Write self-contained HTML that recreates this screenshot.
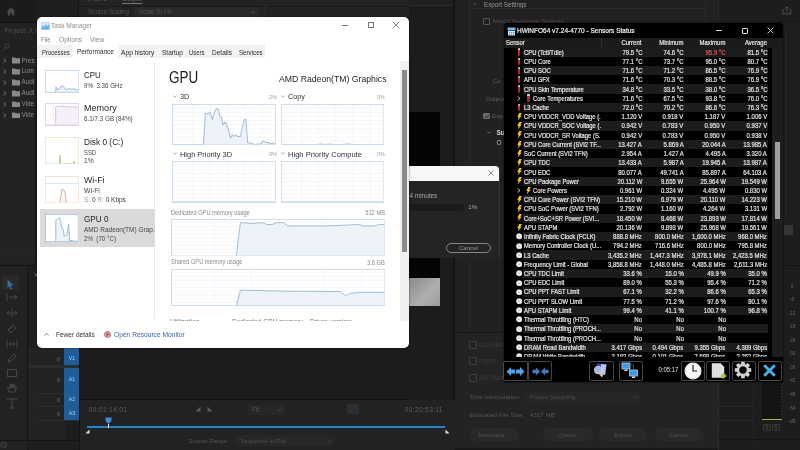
<!DOCTYPE html><html><head><meta charset="utf-8"><style>
html,body{margin:0;padding:0;width:800px;height:450px;overflow:hidden;background:#1e1e1e;}
body{position:relative;font-family:"Liberation Sans",sans-serif;}
div,svg{box-sizing:border-box;}
#root{position:absolute;left:0;top:0;width:800px;height:450px;will-change:transform;}
</style></head><body><div id="root">
<div style="position:absolute;left:0.00px;top:0.00px;width:800.00px;height:450.00px;background:#1f1f1f;"></div>
<div style="position:absolute;left:0.00px;top:0.00px;width:78.00px;height:22.00px;background:#1a1a1a;"></div>
<div style="position:absolute;left:0.00px;top:0.00px;width:800.00px;height:450.00px;background:#1e1e1e;"></div>
<div style="position:absolute;left:0.00px;top:0.00px;width:37.00px;height:22.00px;background:#1b1b1b;"></div>
<svg style="position:absolute;left:5.5px;top:6.5px" width="10" height="9" viewBox="0 0 10 9"><path d="M5 0.5 L9.5 4.5 L8.2 4.5 L8.2 8.5 L6 8.5 L6 6 L4 6 L4 8.5 L1.8 8.5 L1.8 4.5 L0.5 4.5Z" fill="#4a4a4a"/></svg>
<div style="position:absolute;left:0.00px;top:22.00px;width:37.00px;height:0.80px;background:#121212;"></div>
<div style="position:absolute;left:0.00px;top:23.00px;width:37.00px;height:17.00px;background:#222;"></div>
<div style="position:absolute;top:27.90px;font-size:6.6px;line-height:6.6px;color:#505050;white-space:nowrap;left:4.50px;">Project: X F</div>
<div style="position:absolute;left:0.00px;top:40.00px;width:37.00px;height:15.00px;background:#202020;"></div>
<svg style="position:absolute;left:2px;top:43px" width="8" height="8" viewBox="0 0 8 8"><circle cx="5" cy="3" r="2.2" fill="none" stroke="#444" stroke-width="0.9"/><path d="M3.4 4.6 L0.8 7.2" stroke="#444" stroke-width="1"/></svg>
<div style="position:absolute;left:0.00px;top:55.00px;width:37.00px;height:209.00px;background:#232323;"></div>
<svg style="position:absolute;left:2.5px;top:58.20px" width="4" height="5" viewBox="0 0 4 5"><path d="M0.6 0.5 L3 2.5 L0.6 4.5" fill="none" stroke="#8a8a8a" stroke-width="0.8"/></svg>
<svg style="position:absolute;left:11.5px;top:57.10px" width="8" height="6.6" viewBox="0 0 8 6.6"><path d="M0 0.4 L3 0.4 L3.8 1.3 L8 1.3 L8 6.6 L0 6.6Z" fill="#8a8a8a"/></svg>
<div style="position:absolute;top:57.50px;font-size:6.4px;line-height:6.4px;color:#8a8a8a;white-space:nowrap;left:21.50px;">Prese</div>
<svg style="position:absolute;left:2.5px;top:69.15px" width="4" height="5" viewBox="0 0 4 5"><path d="M0.6 0.5 L3 2.5 L0.6 4.5" fill="none" stroke="#8a8a8a" stroke-width="0.8"/></svg>
<svg style="position:absolute;left:11.5px;top:68.05px" width="8" height="6.6" viewBox="0 0 8 6.6"><path d="M0 0.4 L3 0.4 L3.8 1.3 L8 1.3 L8 6.6 L0 6.6Z" fill="#8a8a8a"/></svg>
<div style="position:absolute;top:68.45px;font-size:6.4px;line-height:6.4px;color:#8a8a8a;white-space:nowrap;left:21.50px;">Lum</div>
<svg style="position:absolute;left:2.5px;top:80.10px" width="4" height="5" viewBox="0 0 4 5"><path d="M0.6 0.5 L3 2.5 L0.6 4.5" fill="none" stroke="#8a8a8a" stroke-width="0.8"/></svg>
<svg style="position:absolute;left:11.5px;top:79.00px" width="8" height="6.6" viewBox="0 0 8 6.6"><path d="M0 0.4 L3 0.4 L3.8 1.3 L8 1.3 L8 6.6 L0 6.6Z" fill="#8a8a8a"/></svg>
<div style="position:absolute;top:79.40px;font-size:6.4px;line-height:6.4px;color:#8a8a8a;white-space:nowrap;left:21.50px;">Audi</div>
<svg style="position:absolute;left:2.5px;top:91.05px" width="4" height="5" viewBox="0 0 4 5"><path d="M0.6 0.5 L3 2.5 L0.6 4.5" fill="none" stroke="#8a8a8a" stroke-width="0.8"/></svg>
<svg style="position:absolute;left:11.5px;top:89.95px" width="8" height="6.6" viewBox="0 0 8 6.6"><path d="M0 0.4 L3 0.4 L3.8 1.3 L8 1.3 L8 6.6 L0 6.6Z" fill="#8a8a8a"/></svg>
<div style="position:absolute;top:90.35px;font-size:6.4px;line-height:6.4px;color:#8a8a8a;white-space:nowrap;left:21.50px;">Audi</div>
<svg style="position:absolute;left:2.5px;top:102.00px" width="4" height="5" viewBox="0 0 4 5"><path d="M0.6 0.5 L3 2.5 L0.6 4.5" fill="none" stroke="#8a8a8a" stroke-width="0.8"/></svg>
<svg style="position:absolute;left:11.5px;top:100.90px" width="8" height="6.6" viewBox="0 0 8 6.6"><path d="M0 0.4 L3 0.4 L3.8 1.3 L8 1.3 L8 6.6 L0 6.6Z" fill="#8a8a8a"/></svg>
<div style="position:absolute;top:101.30px;font-size:6.4px;line-height:6.4px;color:#8a8a8a;white-space:nowrap;left:21.50px;">Vide</div>
<svg style="position:absolute;left:2.5px;top:112.95px" width="4" height="5" viewBox="0 0 4 5"><path d="M0.6 0.5 L3 2.5 L0.6 4.5" fill="none" stroke="#8a8a8a" stroke-width="0.8"/></svg>
<svg style="position:absolute;left:11.5px;top:111.85px" width="8" height="6.6" viewBox="0 0 8 6.6"><path d="M0 0.4 L3 0.4 L3.8 1.3 L8 1.3 L8 6.6 L0 6.6Z" fill="#8a8a8a"/></svg>
<div style="position:absolute;top:112.25px;font-size:6.4px;line-height:6.4px;color:#8a8a8a;white-space:nowrap;left:21.50px;">Vide</div>
<div style="position:absolute;left:35.00px;top:55.00px;width:2.00px;height:209.00px;background:#1a1a1a;"></div>
<div style="position:absolute;left:0.00px;top:254.10px;width:37.00px;height:0.60px;background:#282828;"></div>
<div style="position:absolute;left:0.00px;top:264.60px;width:37.00px;height:1.40px;background:#151515;"></div>
<div style="position:absolute;left:0.00px;top:266.00px;width:26.50px;height:184.00px;background:#222;"></div>
<div style="position:absolute;left:26.50px;top:266.00px;width:1.00px;height:184.00px;background:#151515;"></div>
<div style="position:absolute;left:27.50px;top:266.00px;width:9.50px;height:82.00px;background:#1e1e1e;"></div>
<svg style="position:absolute;left:33.5px;top:273px" width="4" height="4" viewBox="0 0 4 4"><path d="M0.5 0.5L3.5 3.5M3.5 0.5L0.5 3.5" stroke="#777" stroke-width="0.7"/></svg>
<div style="position:absolute;left:2.30px;top:275.40px;width:16.40px;height:14.80px;background:#2a2a2a;"></div>
<svg style="position:absolute;left:7px;top:278.5px" width="7" height="11" viewBox="0 0 7 11"><path d="M0.5 0.5 L6.5 6.5 L3.6 6.5 L5 10 L3.6 10.5 L2.2 7 L0.5 8.7Z" fill="#3b6ea6"/></svg>
<svg style="position:absolute;left:5.5px;top:292.00px" width="12" height="11" viewBox="0 0 12 11"><path d="M1 1 L1 9 M3 5 L11 5 M8 3 L11 5 L8 7" fill="none" stroke="#4c4c4c" stroke-width="0.9"/></svg>
<svg style="position:absolute;left:5.5px;top:308.00px" width="12" height="11" viewBox="0 0 12 11"><path d="M6 1 L6 9 M1 5 L5 5 M7 5 L11 5 M3 3 L1 5 L3 7 M9 3 L11 5 L9 7" fill="none" stroke="#4c4c4c" stroke-width="0.9"/></svg>
<svg style="position:absolute;left:5.5px;top:323.00px" width="12" height="11" viewBox="0 0 12 11"><path d="M2 7 L7 2 L10 5 L5 10Z M3.5 6.5 L6.5 3.5" fill="none" stroke="#4c4c4c" stroke-width="0.9"/></svg>
<svg style="position:absolute;left:5.5px;top:338.70px" width="12" height="11" viewBox="0 0 12 11"><path d="M1 1 L1 9 M11 1 L11 9 M3 5 L9 5 M4.5 3.5 L3 5 L4.5 6.5 M7.5 3.5 L9 5 L7.5 6.5" fill="none" stroke="#4c4c4c" stroke-width="0.9"/></svg>
<svg style="position:absolute;left:5.5px;top:353.00px" width="12" height="11" viewBox="0 0 12 11"><path d="M2 9 L3 6 L8 1 L10 3 L5 8Z" fill="none" stroke="#4c4c4c" stroke-width="0.9"/></svg>
<svg style="position:absolute;left:5.5px;top:368.00px" width="12" height="11" viewBox="0 0 12 11"><rect x="1.5" y="1.5" width="9" height="7" fill="none" stroke="#4c4c4c" stroke-width="0.9"/></svg>
<svg style="position:absolute;left:5.5px;top:382.70px" width="12" height="11" viewBox="0 0 12 11"><path d="M3 9 L1.5 5 L3 4.5 L4 6 L4 1.5 L5.2 1.5 L5.2 5 L5.5 1 L6.8 1 L6.8 5 L7.3 1.5 L8.5 1.5 L8.5 5.5 L9.5 3.5 L10.5 4 L9 9Z" fill="none" stroke="#4c4c4c" stroke-width="0.9"/></svg>
<svg style="position:absolute;left:5.5px;top:398.00px" width="12" height="11" viewBox="0 0 12 11"><path d="M1.5 2.5 L1.5 1 L10.5 1 L10.5 2.5 M6 1 L6 10 M4 10 L8 10" fill="none" stroke="#4c4c4c" stroke-width="0.9"/></svg>
<div style="position:absolute;left:0.00px;top:440.00px;width:80.00px;height:0.80px;background:#151515;"></div>
<svg style="position:absolute;left:0px;top:441px" width="8" height="8" viewBox="0 0 8 8"><circle cx="3.5" cy="4" r="3" fill="none" stroke="#4a4a4a" stroke-width="0.8"/><path d="M1.5 2 L5.5 6 M5.5 2 L1.5 6" stroke="#4a4a4a" stroke-width="0.6"/></svg>
<div style="position:absolute;left:27.50px;top:348.00px;width:37.00px;height:92.00px;background:#232323;"></div>
<div style="position:absolute;left:64.20px;top:348.00px;width:15.40px;height:17.00px;background:#1d5e9a;"></div>
<div style="position:absolute;left:64.20px;top:368.00px;width:15.40px;height:52.10px;background:#1d5e9a;"></div>
<div style="position:absolute;left:64.20px;top:392.60px;width:15.40px;height:0.50px;background:#2a5a85;"></div>
<div style="position:absolute;left:64.20px;top:406.20px;width:15.40px;height:0.50px;background:#2a5a85;"></div>
<div style="position:absolute;left:27.50px;top:365.00px;width:52.00px;height:3.00px;background:#2c2c2c;"></div>
<div style="position:absolute;left:37.00px;top:392.90px;width:27.00px;height:0.50px;background:#2d2d2d;"></div>
<div style="position:absolute;left:37.00px;top:406.10px;width:27.00px;height:0.50px;background:#2d2d2d;"></div>
<div style="position:absolute;left:37.00px;top:420.30px;width:43.00px;height:0.60px;background:#2d2d2d;"></div>
<div style="position:absolute;top:356.20px;font-size:5.2px;line-height:5.2px;color:#b8cde0;white-space:nowrap;left:71.90px;transform:translateX(-50%);">V1</div>
<div style="position:absolute;left:56.50px;top:356.80px;width:3.00px;height:4.00px;background:#3d3d3d;"></div>
<div style="position:absolute;top:377.40px;font-size:5.2px;line-height:5.2px;color:#b8cde0;white-space:nowrap;left:71.90px;transform:translateX(-50%);">A1</div>
<div style="position:absolute;left:56.50px;top:378.00px;width:3.00px;height:4.00px;background:#3d3d3d;"></div>
<div style="position:absolute;top:397.00px;font-size:5.2px;line-height:5.2px;color:#b8cde0;white-space:nowrap;left:71.90px;transform:translateX(-50%);">A2</div>
<div style="position:absolute;left:56.50px;top:397.60px;width:3.00px;height:4.00px;background:#3d3d3d;"></div>
<div style="position:absolute;top:411.00px;font-size:5.2px;line-height:5.2px;color:#b8cde0;white-space:nowrap;left:71.90px;transform:translateX(-50%);">A3</div>
<div style="position:absolute;left:56.50px;top:411.60px;width:3.00px;height:4.00px;background:#3d3d3d;"></div>
<div style="position:absolute;left:78.00px;top:0.00px;width:332.00px;height:17.00px;background:#232323;"></div>
<div style="position:absolute;left:78.00px;top:0.00px;width:0.80px;height:17.00px;background:#141414;"></div>
<div style="position:absolute;top:-4.05px;font-size:6.5px;line-height:6.5px;color:#5a5a5a;white-space:nowrap;left:88.00px;">Frame</div>
<div style="position:absolute;top:-4.05px;font-size:6.5px;line-height:6.5px;color:#6a6a6a;white-space:nowrap;left:122.00px;">Output</div>
<div style="position:absolute;left:122.00px;top:3.20px;width:20.00px;height:0.70px;background:#777;"></div>
<div style="position:absolute;left:78.80px;top:6.00px;width:331.00px;height:0.70px;background:#1a1a1a;"></div>
<div style="position:absolute;top:9.10px;font-size:6.4px;line-height:6.4px;color:#505050;white-space:nowrap;left:88.00px;transform-origin:0 50%;transform: scaleX(0.95);">Source Scaling</div>
<div style="position:absolute;left:133.50px;top:6.50px;width:125.00px;height:11.00px;background:#2a2a2a;border-radius:1px;"></div>
<div style="position:absolute;top:9.10px;font-size:6.4px;line-height:6.4px;color:#505050;white-space:nowrap;left:138.70px;transform-origin:0 50%;transform: scaleX(0.95);">Scale To Fill</div>
<svg style="position:absolute;left:251px;top:10.5px" width="4" height="3" viewBox="0 0 4 3"><path d="M0.3 0.5 L2 2.2 L3.7 0.5" fill="none" stroke="#666" stroke-width="0.7"/></svg>
<div style="position:absolute;left:265.00px;top:4.00px;width:0.70px;height:13.00px;background:#2e2e2e;"></div>
<div style="position:absolute;left:80.00px;top:348.00px;width:330.00px;height:50.50px;background:#1c1c1c;"></div>
<div style="position:absolute;left:79.20px;top:348.00px;width:0.80px;height:102.00px;background:#141414;"></div>
<div style="position:absolute;left:80.00px;top:398.70px;width:375.00px;height:1.30px;background:#131313;"></div>
<div style="position:absolute;left:80.00px;top:400.00px;width:375.00px;height:50.00px;background:#222;"></div>
<div style="position:absolute;top:406.60px;font-size:6.6px;line-height:6.6px;color:#5e5e5e;white-space:nowrap;left:88.70px;letter-spacing:0.35px;">00:01:14:01</div>
<svg style="position:absolute;left:195px;top:405.5px" width="6" height="6" viewBox="0 0 6 6"><path d="M5.5 0.5 L5.5 5.5 L0.5 5.5Z" fill="#5a5a5a"/></svg>
<svg style="position:absolute;left:207px;top:405.5px" width="6" height="6" viewBox="0 0 6 6"><path d="M0.5 0.5 L0.5 5.5 L5.5 5.5Z" fill="#5a5a5a"/></svg>
<div style="position:absolute;left:248.00px;top:404.50px;width:37.00px;height:10.50px;background:#272727;border-radius:1px;"></div>
<svg style="position:absolute;left:278px;top:408.5px" width="4" height="3" viewBox="0 0 4 3"><path d="M0.3 0.5 L2 2.2 L3.7 0.5" fill="none" stroke="#555" stroke-width="0.7"/></svg>
<div style="position:absolute;top:406.50px;font-size:6.4px;line-height:6.4px;color:#555;white-space:nowrap;left:252.00px;">Fit</div>
<div style="position:absolute;left:87.00px;top:425.50px;width:358.00px;height:2.90px;background:#1b88d2;"></div>
<svg style="position:absolute;left:104.5px;top:417px" width="7" height="8" viewBox="0 0 7 8"><path d="M0.5 0.5 L6.5 0.5 L6.5 4 L3.5 7 L0.5 4Z" fill="#3a8ee0"/></svg>
<div style="position:absolute;left:107.80px;top:424.00px;width:0.70px;height:4.00px;background:#fff;"></div>
<svg style="position:absolute;left:84.5px;top:428.5px" width="5" height="5" viewBox="0 0 5 5"><path d="M4.5 0.5 L4.5 4.5 L0.5 4.5Z" fill="#ddd"/></svg>
<svg style="position:absolute;left:445px;top:428.5px" width="5" height="5" viewBox="0 0 5 5"><path d="M0.5 0.5 L4.5 4.5 L0.5 4.5Z" fill="#ddd"/></svg>
<div style="position:absolute;top:437.50px;font-size:6.0px;line-height:6.0px;color:#555;white-space:nowrap;right:571.50px;">Source Range:</div>
<div style="position:absolute;left:236.00px;top:435.00px;width:99.00px;height:11.00px;background:#272727;border-radius:1px;"></div>
<svg style="position:absolute;left:328px;top:439.5px" width="4" height="3" viewBox="0 0 4 3"><path d="M0.3 0.5 L2 2.2 L3.7 0.5" fill="none" stroke="#555" stroke-width="0.7"/></svg>
<div style="position:absolute;top:437.50px;font-size:6.0px;line-height:6.0px;color:#505050;white-space:nowrap;left:240.50px;">Sequence In/Out</div>
<div style="position:absolute;top:406.60px;font-size:6.6px;line-height:6.6px;color:#5e5e5e;white-space:nowrap;left:404.70px;letter-spacing:0.35px;">00:20:53:11</div>
<div style="position:absolute;left:347.00px;top:404.00px;width:12.00px;height:10.00px;background:#2a2e35;"></div>
<div style="position:absolute;left:409.00px;top:0.00px;width:45.00px;height:400.00px;background:#1c1c1c;"></div>
<div style="position:absolute;left:409.00px;top:0.00px;width:45.00px;height:5.20px;background:#1e1e1e;"></div>
<div style="position:absolute;left:409.00px;top:5.20px;width:45.00px;height:0.70px;background:#2c2c2c;"></div>
<div style="position:absolute;left:409.00px;top:112.00px;width:30.60px;height:165.80px;background:#050505;"></div>
<div style="position:absolute;left:409px;top:277.8px;width:30.6px;height:28.7px;background:linear-gradient(135deg,#8a8a8a,#b0b0b0 60%,#9a9a9a);"></div>
<div style="position:absolute;left:453.30px;top:0.00px;width:1.50px;height:400.00px;background:#141414;"></div>
<div style="position:absolute;left:454.80px;top:0.00px;width:263.00px;height:450.00px;background:#212121;"></div>
<div style="position:absolute;left:469.30px;top:0.00px;width:0.70px;height:332.00px;background:#282828;"></div>
<div style="position:absolute;left:455.00px;top:332.00px;width:263.00px;height:0.80px;background:#171717;"></div>
<div style="position:absolute;left:455.00px;top:332.80px;width:263.00px;height:118.00px;background:#232323;"></div>
<svg style="position:absolute;left:472.5px;top:2.5px" width="4" height="3" viewBox="0 0 4 3"><path d="M0.3 0.5 L2 2.2 L3.7 0.5" fill="none" stroke="#666" stroke-width="0.7"/></svg>
<div style="position:absolute;top:1.50px;font-size:6.6px;line-height:6.6px;color:#9a9a9a;white-space:nowrap;left:483.60px;transform-origin:0 50%;transform: scaleX(0.95);">Export Settings</div>
<div style="position:absolute;left:470.00px;top:8.10px;width:235.00px;height:0.70px;background:#2c2c2c;"></div>
<div style="position:absolute;left:705.00px;top:0.00px;width:0.70px;height:22.00px;background:#2a2a2a;"></div>
<div style="position:absolute;left:482.5px;top:18px;width:7.5px;height:6.8px;border:0.9px solid #555;border-radius:1px;"></div>
<div style="position:absolute;top:18.30px;font-size:6.2px;line-height:6.2px;color:#5a4848;white-space:nowrap;left:493.00px;">Match Sequence Settings</div>
<div style="position:absolute;top:77.60px;font-size:6.2px;line-height:6.2px;color:#5a5a5a;white-space:nowrap;left:492.90px;">Co</div>
<div style="position:absolute;top:96.20px;font-size:6.2px;line-height:6.2px;color:#606060;white-space:nowrap;left:485.80px;">Output</div>
<div style="position:absolute;left:482.7px;top:112.7px;width:7.2px;height:6.8px;background:#6a6a6a;border-radius:1px;"></div>
<svg style="position:absolute;left:483.5px;top:113.5px" width="6" height="5" viewBox="0 0 6 5"><path d="M0.8 2.5 L2.3 4 L5.3 0.8" fill="none" stroke="#222" stroke-width="0.9"/></svg>
<div style="position:absolute;top:113.10px;font-size:6.2px;line-height:6.2px;color:#606060;white-space:nowrap;left:492.00px;">Exp</div>
<svg style="position:absolute;left:486.5px;top:131px" width="4" height="3" viewBox="0 0 4 3"><path d="M0.3 0.5 L2 2.2 L3.7 0.5" fill="none" stroke="#777" stroke-width="0.7"/></svg>
<div style="position:absolute;top:129.80px;font-size:6.4px;line-height:6.4px;color:#ddd;white-space:nowrap;left:496.40px;font-weight:bold;">Su</div>
<div style="position:absolute;top:139.80px;font-size:6.4px;line-height:6.4px;color:#bbb;white-space:nowrap;left:496.40px;">O</div>
<div style="position:absolute;left:409.00px;top:165.70px;width:90.20px;height:92.50px;background:#242424;"></div>
<div style="position:absolute;left:409.00px;top:165.70px;width:90.20px;height:15.00px;background:#f7f7f7;border-radius:0 4px 0 0;"></div>
<svg style="position:absolute;left:487.5px;top:169.8px" width="6" height="6" viewBox="0 0 6 6"><path d="M0.4 0.4L5.6 5.6M5.6 0.4L0.4 5.6" stroke="#777" stroke-width="0.8"/></svg>
<div style="position:absolute;top:192.80px;font-size:6.4px;line-height:6.4px;color:#aaa;white-space:nowrap;left:409.50px;">4 minutes</div>
<div style="position:absolute;left:409.00px;top:204.30px;width:55.00px;height:6.50px;background:#1b1b1b;border-radius:0 3px 3px 0;"></div>
<div style="position:absolute;top:204.40px;font-size:6.2px;line-height:6.2px;color:#aaa;white-space:nowrap;right:322.70px;">1%</div>
<div style="position:absolute;left:446px;top:242.5px;width:44.8px;height:10.7px;border:1px solid #888;border-radius:5px;"></div>
<div style="position:absolute;top:244.85px;font-size:6.1px;line-height:6.1px;color:#9a9a9a;white-space:nowrap;left:468.40px;transform:translateX(-50%);">Cancel</div>
<div style="position:absolute;left:499.20px;top:165.70px;width:0.80px;height:92.50px;background:#333;"></div>
<div style="position:absolute;left:469px;top:341.00px;width:7.6px;height:7.6px;border:0.9px solid #3f3f3f;border-radius:1px;"></div>
<div style="position:absolute;top:341.60px;font-size:6.6px;line-height:6.6px;color:#3c3c3c;white-space:nowrap;left:479.00px;transform-origin:0 50%;transform: scaleX(0.95);">Use Max</div>
<div style="position:absolute;left:469px;top:357.30px;width:7.6px;height:7.6px;border:0.9px solid #3f3f3f;border-radius:1px;"></div>
<div style="position:absolute;top:357.90px;font-size:6.6px;line-height:6.6px;color:#3c3c3c;white-space:nowrap;left:479.00px;transform-origin:0 50%;transform: scaleX(0.95);">Import</div>
<div style="position:absolute;left:469px;top:374.10px;width:7.6px;height:7.6px;border:0.9px solid #3f3f3f;border-radius:1px;"></div>
<div style="position:absolute;top:374.70px;font-size:6.6px;line-height:6.6px;color:#3c3c3c;white-space:nowrap;left:479.00px;transform-origin:0 50%;transform: scaleX(0.95);">Set Start</div>
<div style="position:absolute;top:393.90px;font-size:6.2px;line-height:6.2px;color:#555;white-space:nowrap;left:469.50px;">Time Interpolation:</div>
<div style="position:absolute;left:525.00px;top:391.50px;width:115.00px;height:11.00px;background:#262626;border-radius:1px;"></div>
<div style="position:absolute;top:393.90px;font-size:6.2px;line-height:6.2px;color:#4a4a4a;white-space:nowrap;left:530.00px;">Frame Sampling</div>
<svg style="position:absolute;left:635px;top:395.5px" width="4" height="3" viewBox="0 0 4 3"><path d="M0.3 0.5 L2 2.2 L3.7 0.5" fill="none" stroke="#555" stroke-width="0.7"/></svg>
<div style="position:absolute;top:412.40px;font-size:6.2px;line-height:6.2px;color:#555;white-space:nowrap;left:469.50px;">Estimated File Size:</div>
<div style="position:absolute;top:412.40px;font-size:6.2px;line-height:6.2px;color:#555;white-space:nowrap;left:530.00px;">4317 MB</div>
<div style="position:absolute;left:468.7px;top:428px;width:50.80px;height:13.2px;background:#292929;border-radius:6.6px;"></div>
<div style="position:absolute;top:431.50px;font-size:6.2px;line-height:6.2px;color:#4e4e4e;white-space:nowrap;left:494.10px;transform:translateX(-50%);">Metadata...</div>
<div style="position:absolute;left:542.5px;top:428px;width:50.00px;height:13.2px;background:#292929;border-radius:6.6px;"></div>
<div style="position:absolute;top:431.50px;font-size:6.2px;line-height:6.2px;color:#4e4e4e;white-space:nowrap;left:567.50px;transform:translateX(-50%);">Queue</div>
<div style="position:absolute;left:598.7px;top:428px;width:48.80px;height:13.2px;background:#292929;border-radius:6.6px;"></div>
<div style="position:absolute;top:431.50px;font-size:6.2px;line-height:6.2px;color:#4e4e4e;white-space:nowrap;left:623.10px;transform:translateX(-50%);">Export</div>
<div style="position:absolute;left:654.5px;top:428px;width:49.20px;height:13.2px;background:#292929;border-radius:6.6px;"></div>
<div style="position:absolute;top:431.50px;font-size:6.2px;line-height:6.2px;color:#4e4e4e;white-space:nowrap;left:679.10px;transform:translateX(-50%);">Cancel</div>
<div style="position:absolute;left:717.50px;top:0.00px;width:1.00px;height:450.00px;background:#2a2a2a;"></div>
<div style="position:absolute;left:455.00px;top:448.40px;width:263.00px;height:1.60px;background:#191919;"></div>
<div style="position:absolute;left:718.50px;top:0.00px;width:81.50px;height:450.00px;background:#1d1d1d;"></div>
<div style="position:absolute;left:718.50px;top:21.00px;width:81.50px;height:0.80px;background:#161616;"></div>
<svg style="position:absolute;left:782px;top:6px" width="9.5" height="8.5" viewBox="0 0 10 9"><path d="M2 4 L0.7 4 L0.7 8.3 L9.3 8.3 L9.3 4 L8 4 M5 6 L5 0.8 M3.2 2.6 L5 0.8 L6.8 2.6" fill="none" stroke="#5a5a5a" stroke-width="0.9"/></svg>
<div style="position:absolute;left:786.00px;top:22.00px;width:0.60px;height:200.00px;background:#222;"></div>
<div style="position:absolute;left:790.00px;top:22.00px;width:0.60px;height:200.00px;background:#222;"></div>
<div style="position:absolute;left:794.00px;top:22.00px;width:0.60px;height:200.00px;background:#222;"></div>
<div style="position:absolute;left:798.00px;top:22.00px;width:0.60px;height:200.00px;background:#222;"></div>
<div style="position:absolute;left:784.00px;top:224.90px;width:9.30px;height:10.60px;background:#363636;"></div>
<div style="position:absolute;left:783.00px;top:265.30px;width:17.00px;height:0.80px;background:#141414;"></div>
<div style="position:absolute;left:761.50px;top:382.00px;width:20.30px;height:37.00px;background:#141414;"></div>
<div style="position:absolute;left:761.50px;top:418.70px;width:20.30px;height:0.90px;background:#aeb22e;"></div>
<div style="position:absolute;left:781.00px;top:384.00px;width:0.80px;height:1.00px;background:#3a3a3a;"></div>
<div style="position:absolute;left:781.00px;top:387.00px;width:0.80px;height:1.00px;background:#3a3a3a;"></div>
<div style="position:absolute;left:781.00px;top:390.00px;width:0.80px;height:1.00px;background:#3a3a3a;"></div>
<div style="position:absolute;left:781.00px;top:393.00px;width:0.80px;height:1.00px;background:#3a3a3a;"></div>
<div style="position:absolute;left:781.00px;top:396.00px;width:0.80px;height:1.00px;background:#3a3a3a;"></div>
<div style="position:absolute;left:781.00px;top:399.00px;width:0.80px;height:1.00px;background:#3a3a3a;"></div>
<div style="position:absolute;left:781.00px;top:402.00px;width:0.80px;height:1.00px;background:#3a3a3a;"></div>
<div style="position:absolute;left:781.00px;top:405.00px;width:0.80px;height:1.00px;background:#3a3a3a;"></div>
<div style="position:absolute;left:781.00px;top:408.00px;width:0.80px;height:1.00px;background:#3a3a3a;"></div>
<div style="position:absolute;left:781.00px;top:411.00px;width:0.80px;height:1.00px;background:#3a3a3a;"></div>
<div style="position:absolute;left:781.00px;top:414.00px;width:0.80px;height:1.00px;background:#3a3a3a;"></div>
<div style="position:absolute;left:781.00px;top:417.00px;width:0.80px;height:1.00px;background:#3a3a3a;"></div>
<div style="position:absolute;left:763.00px;top:424.30px;width:8.00px;height:7.00px;background:#202020;border:0.6px solid #333;"></div>
<div style="position:absolute;left:772.00px;top:424.30px;width:8.00px;height:7.00px;background:#202020;border:0.6px solid #333;"></div>
<div style="position:absolute;top:425.55px;font-size:4.5px;line-height:4.5px;color:#555;white-space:nowrap;left:767.00px;transform:translateX(-50%);">S</div>
<div style="position:absolute;top:425.55px;font-size:4.5px;line-height:4.5px;color:#555;white-space:nowrap;left:776.00px;transform:translateX(-50%);">S</div>
<div style="position:absolute;top:284.50px;font-size:4.6px;line-height:4.6px;color:#666;white-space:nowrap;left:792.00px;transform:translateX(-50%);">0</div>
<div style="position:absolute;top:298.07px;font-size:4.6px;line-height:4.6px;color:#666;white-space:nowrap;left:792.00px;transform:translateX(-50%);">-6</div>
<div style="position:absolute;top:311.64px;font-size:4.6px;line-height:4.6px;color:#666;white-space:nowrap;left:792.00px;transform:translateX(-50%);">-12</div>
<div style="position:absolute;top:325.21px;font-size:4.6px;line-height:4.6px;color:#666;white-space:nowrap;left:792.00px;transform:translateX(-50%);">-18</div>
<div style="position:absolute;top:338.78px;font-size:4.6px;line-height:4.6px;color:#666;white-space:nowrap;left:792.00px;transform:translateX(-50%);">-24</div>
<div style="position:absolute;top:352.35px;font-size:4.6px;line-height:4.6px;color:#666;white-space:nowrap;left:792.00px;transform:translateX(-50%);">-30</div>
<div style="position:absolute;top:365.92px;font-size:4.6px;line-height:4.6px;color:#666;white-space:nowrap;left:792.00px;transform:translateX(-50%);">-36</div>
<div style="position:absolute;top:379.49px;font-size:4.6px;line-height:4.6px;color:#666;white-space:nowrap;left:792.00px;transform:translateX(-50%);">-42</div>
<div style="position:absolute;top:393.06px;font-size:4.6px;line-height:4.6px;color:#666;white-space:nowrap;left:792.00px;transform:translateX(-50%);">-48</div>
<div style="position:absolute;top:406.63px;font-size:4.6px;line-height:4.6px;color:#666;white-space:nowrap;left:792.00px;transform:translateX(-50%);">-54</div>
<div style="position:absolute;top:420.20px;font-size:4.6px;line-height:4.6px;color:#666;white-space:nowrap;left:792.00px;transform:translateX(-50%);">-dB</div>
<div style="position:absolute;left:753.00px;top:382.00px;width:0.80px;height:60.00px;background:#262626;"></div>
<div style="position:absolute;left:718.50px;top:405.70px;width:35.00px;height:0.60px;background:#262626;"></div>
<div style="position:absolute;left:718.50px;top:419.70px;width:35.00px;height:0.60px;background:#262626;"></div>
<div style="position:absolute;left:718.50px;top:439.00px;width:81.50px;height:0.80px;background:#151515;"></div>
<div style="position:absolute;left:37px;top:17px;width:372px;height:331px;background:#fff;border-radius:5px;box-shadow:0 0 2px rgba(0,0,0,.6);"></div>
<svg style="position:absolute;left:41px;top:21.5px" width="9" height="8" viewBox="0 0 9 8"><rect x="0" y="0" width="9" height="8" fill="#d6e7f5" stroke="#9fbfdc" stroke-width="0.6"/><path d="M0.8 6 L2.2 3 L3.6 5 L5 2.2 L6.5 4.5 L8.2 2 L8.2 7.4 L0.8 7.4Z" fill="#6aaee3"/></svg>
<div style="position:absolute;top:21.65px;font-size:7.3px;line-height:7.3px;color:#8c8c8c;white-space:nowrap;left:50.70px;transform-origin:0 50%;transform: scaleX(0.894);">Task Manager</div>
<div style="position:absolute;left:342.00px;top:25.00px;width:6.00px;height:0.80px;background:#777;"></div>
<div style="position:absolute;left:367.5px;top:21.5px;width:6.5px;height:6.5px;border:0.9px solid #777;"></div>
<svg style="position:absolute;left:392px;top:21px" width="8" height="8" viewBox="0 0 8 8"><path d="M0.5 0.5L7.5 7.5M7.5 0.5L0.5 7.5" stroke="#777" stroke-width="0.9"/></svg>
<div style="position:absolute;top:35.60px;font-size:7.2px;line-height:7.2px;color:#8a8a8a;white-space:nowrap;left:41.25px;transform-origin:0 50%;transform: scaleX(0.84);">File</div>
<div style="position:absolute;top:35.60px;font-size:7.2px;line-height:7.2px;color:#8a8a8a;white-space:nowrap;left:59.25px;transform-origin:0 50%;transform: scaleX(0.925);">Options</div>
<div style="position:absolute;top:35.60px;font-size:7.2px;line-height:7.2px;color:#8a8a8a;white-space:nowrap;left:90.30px;transform-origin:0 50%;transform: scaleX(0.931);">View</div>
<div style="position:absolute;left:37.00px;top:45.00px;width:227.75px;height:13.00px;background:#f2f2f2;"></div>
<div style="position:absolute;left:72.70px;top:45.00px;width:45.00px;height:15.00px;background:#fff;"></div>
<div style="position:absolute;top:49.40px;font-size:7.2px;line-height:7.2px;color:#2a2a2a;white-space:nowrap;left:42.00px;transform-origin:0 50%;transform: scaleX(0.826);">Processes</div>
<div style="position:absolute;top:48.20px;font-size:7.2px;line-height:7.2px;color:#2a2a2a;white-space:nowrap;left:76.80px;transform-origin:0 50%;transform: scaleX(0.895);">Performance</div>
<div style="position:absolute;top:49.40px;font-size:7.2px;line-height:7.2px;color:#2a2a2a;white-space:nowrap;left:121.20px;transform-origin:0 50%;transform: scaleX(0.925);">App history</div>
<div style="position:absolute;top:49.40px;font-size:7.2px;line-height:7.2px;color:#2a2a2a;white-space:nowrap;left:161.70px;transform-origin:0 50%;transform: scaleX(0.905);">Startup</div>
<div style="position:absolute;top:49.40px;font-size:7.2px;line-height:7.2px;color:#2a2a2a;white-space:nowrap;left:189.30px;transform-origin:0 50%;transform: scaleX(0.822);">Users</div>
<div style="position:absolute;top:49.40px;font-size:7.2px;line-height:7.2px;color:#2a2a2a;white-space:nowrap;left:211.80px;transform-origin:0 50%;transform: scaleX(0.907);">Details</div>
<div style="position:absolute;top:49.40px;font-size:7.2px;line-height:7.2px;color:#2a2a2a;white-space:nowrap;left:238.80px;transform-origin:0 50%;transform: scaleX(0.858);">Services</div>
<div style="position:absolute;left:154.00px;top:63.00px;width:0.80px;height:256.00px;background:#ebebeb;"></div>
<div style="position:absolute;left:39.50px;top:209.30px;width:115.50px;height:38.20px;background:#dadada;"></div>
<svg style="position:absolute;left:44.50px;top:70.10px" width="34.20" height="22.60" viewBox="68 62 512 338" preserveAspectRatio="none"><rect x="68" y="62" width="512" height="338" fill="#fff"/><path d="M68,400 L225,400 L232,310 L250,360 L290,335 L320,300 L345,310 L370,345 L400,350 L440,340 L470,355 L500,340 L530,360 L580,350 L580,400 L68,400Z" fill="#f0f6fb"/><path d="M68,400 L225,400 L232,310 L250,360 L290,335 L320,300 L345,310 L370,345 L400,350 L440,340 L470,355 L500,340 L530,360 L580,350" fill="none" stroke="#a6c2de" stroke-width="14.96" vector-effect="none"/><rect x="68" y="62" width="512" height="338" fill="none" stroke="#cbd8e6" stroke-width="26.92"/></svg>
<svg style="position:absolute;left:44.50px;top:103.30px" width="34.20" height="22.40" viewBox="68 65 512 335" preserveAspectRatio="none"><rect x="68" y="65" width="512" height="335" fill="#fff"/><line x1="68" y1="148.75" x2="580" y2="148.75" stroke="#f6f0f7" stroke-width="11.96"/><line x1="68" y1="232.50" x2="580" y2="232.50" stroke="#f6f0f7" stroke-width="11.96"/><line x1="68" y1="316.25" x2="580" y2="316.25" stroke="#f6f0f7" stroke-width="11.96"/><line x1="68.00" y1="65" x2="68.00" y2="400" stroke="#f6f0f7" stroke-width="11.98"/><line x1="196.00" y1="65" x2="196.00" y2="400" stroke="#f6f0f7" stroke-width="11.98"/><line x1="324.00" y1="65" x2="324.00" y2="400" stroke="#f6f0f7" stroke-width="11.98"/><line x1="452.00" y1="65" x2="452.00" y2="400" stroke="#f6f0f7" stroke-width="11.98"/><path d="M228,400 L228,115 L360,112 L420,125 L580,125 L580,400 L228,400Z" fill="#f5f0f7"/><path d="M228,400 L228,115 L360,112 L420,125 L580,125" fill="none" stroke="#d9c4df" stroke-width="14.96" vector-effect="none"/><rect x="68" y="65" width="512" height="335" fill="none" stroke="#e2d2e6" stroke-width="26.92"/></svg>
<svg style="position:absolute;left:44.50px;top:137.30px" width="34.20" height="27.20" viewBox="58 55 440 350" preserveAspectRatio="none"><rect x="58" y="55" width="440" height="350" fill="#fff"/><path d="M58,405 L240,405 L250,290 L258,405 L320,400 L340,390 L360,405 L420,400 L430,365 L440,405 L498,405 L498,405 L58,405Z" fill="#f3f9ef"/><path d="M58,405 L240,405 L250,290 L258,405 L320,400 L340,390 L360,405 L420,400 L430,365 L440,405 L498,405" fill="none" stroke="#a9cd8f" stroke-width="12.87" vector-effect="none"/><rect x="58" y="55" width="440" height="350" fill="none" stroke="#dfebd3" stroke-width="23.16"/></svg>
<svg style="position:absolute;left:44.50px;top:176.00px" width="34.20" height="27.30" viewBox="58 65 440 350" preserveAspectRatio="none"><rect x="58" y="65" width="440" height="350" fill="#fff"/><path d="M250,410 L275,235 L300,240 L320,300 L330,410 L330,415 L250,415Z" fill="#fcf5f0"/><path d="M250,410 L275,235 L300,240 L320,300 L330,410" fill="none" stroke="#d2b39d" stroke-width="12.82" vector-effect="none"/><rect x="58" y="65" width="440" height="350" fill="none" stroke="#ebdfd8" stroke-width="23.08"/></svg>
<div style="position:absolute;left:45.50px;top:183.40px;width:32.20px;height:0.80px;background:#e4e9ef;"></div>
<svg style="position:absolute;left:44.80px;top:214.40px" width="33.60" height="28.00" viewBox="60 55 420 350" preserveAspectRatio="none"><rect x="60" y="55" width="420" height="350" fill="#fff"/><path d="M195,405 L195,135 L215,120 L240,100 L255,140 L270,220 L290,260 L300,330 L330,320 L345,250 L355,180 L368,390 L400,385 L420,395 L480,395 L480,405 L195,405Z" fill="#ecf3fa"/><path d="M195,405 L195,135 L215,120 L240,100 L255,140 L270,220 L290,260 L300,330 L330,320 L345,250 L355,180 L368,390 L400,385 L420,395 L480,395" fill="none" stroke="#9ebcd8" stroke-width="12.50" vector-effect="none"/><rect x="60" y="55" width="420" height="350" fill="none" stroke="#b5c7d9" stroke-width="22.50"/></svg>
<div style="position:absolute;top:69.70px;font-size:9.6px;line-height:9.6px;color:#1f1f1f;white-space:nowrap;left:84.00px;transform-origin:0 50%;transform: scaleX(0.824);">CPU</div>
<div style="position:absolute;top:82.10px;font-size:7.2px;line-height:7.2px;color:#454545;white-space:nowrap;left:84.00px;transform-origin:0 50%;transform: scaleX(0.863);">9%&nbsp; 3.36 GHz</div>
<div style="position:absolute;top:103.20px;font-size:9.6px;line-height:9.6px;color:#1f1f1f;white-space:nowrap;left:84.00px;transform-origin:0 50%;transform: scaleX(0.943);">Memory</div>
<div style="position:absolute;top:115.10px;font-size:7.2px;line-height:7.2px;color:#454545;white-space:nowrap;left:84.00px;transform-origin:0 50%;transform: scaleX(0.876);">6.1/7.3 GB (84%)</div>
<div style="position:absolute;top:136.70px;font-size:9.6px;line-height:9.6px;color:#1f1f1f;white-space:nowrap;left:84.00px;transform-origin:0 50%;transform: scaleX(0.865);">Disk 0 (C:)</div>
<div style="position:absolute;top:148.60px;font-size:7.2px;line-height:7.2px;color:#454545;white-space:nowrap;left:84.00px;transform-origin:0 50%;transform: scaleX(0.811);">SSD</div>
<div style="position:absolute;top:157.30px;font-size:7.2px;line-height:7.2px;color:#454545;white-space:nowrap;left:84.00px;transform-origin:0 50%;transform: scaleX(0.932);">1%</div>
<div style="position:absolute;top:175.10px;font-size:9.6px;line-height:9.6px;color:#1f1f1f;white-space:nowrap;left:84.00px;transform-origin:0 50%;transform: scaleX(0.92);">Wi-Fi</div>
<div style="position:absolute;top:186.90px;font-size:7.2px;line-height:7.2px;color:#454545;white-space:nowrap;left:84.00px;transform-origin:0 50%;transform: scaleX(0.947);">Wi-Fi</div>
<div style="position:absolute;top:214.00px;font-size:9.6px;line-height:9.6px;color:#1f1f1f;white-space:nowrap;left:84.00px;transform-origin:0 50%;transform: scaleX(0.85);">GPU 0</div>
<div style="position:absolute;top:226.40px;font-size:7.2px;line-height:7.2px;color:#454545;white-space:nowrap;left:84.00px;transform-origin:0 50%;transform: scaleX(0.903);">AMD Radeon(TM) Grap.</div>
<div style="position:absolute;top:234.90px;font-size:7.2px;line-height:7.2px;color:#454545;white-space:nowrap;left:84.00px;transform-origin:0 50%;transform: scaleX(0.858);">2%&nbsp; (70 °C)</div>
<div style="position:absolute;top:196.00px;font-size:7.2px;line-height:7.2px;color:#3a3a3a;white-space:nowrap;left:84.00px;transform-origin:0 50%;transform: scaleX(0.903);"><span style="color:#9a9a9a">S:</span> 0 <span style="color:#9a9a9a">R:</span> 0 Kbps</div>
<div style="position:absolute;top:70.00px;font-size:15.8px;line-height:15.8px;color:#1a1a1a;white-space:nowrap;left:168.80px;transform-origin:0 50%;transform: scaleX(0.853);">GPU</div>
<div style="position:absolute;top:75.40px;font-size:8.8px;line-height:8.8px;color:#1f1f1f;white-space:nowrap;left:278.70px;transform-origin:0 50%;transform: scaleX(0.986);">AMD Radeon(TM) Graphics</div>
<svg style="position:absolute;left:173.00px;top:94.50px" width="4" height="3" viewBox="0 0 4 3"><path d="M0.3 0.6 L2 2.2 L3.7 0.6" fill="none" stroke="#888" stroke-width="0.7"/></svg>
<div style="position:absolute;top:93.10px;font-size:7.6px;line-height:7.6px;color:#333;white-space:nowrap;left:179.50px;transform-origin:0 50%;transform: scaleX(0.957);">3D</div>
<div style="position:absolute;top:93.80px;font-size:6.2px;line-height:6.2px;color:#a0a0a0;white-space:nowrap;left:268.80px;transform-origin:0 50%;transform: scaleX(0.904);">2%</div>
<svg style="position:absolute;left:281.00px;top:94.50px" width="4" height="3" viewBox="0 0 4 3"><path d="M0.3 0.6 L2 2.2 L3.7 0.6" fill="none" stroke="#888" stroke-width="0.7"/></svg>
<div style="position:absolute;top:93.20px;font-size:7.6px;line-height:7.6px;color:#333;white-space:nowrap;left:287.70px;transform-origin:0 50%;transform: scaleX(0.947);">Copy</div>
<div style="position:absolute;top:93.80px;font-size:6.2px;line-height:6.2px;color:#a0a0a0;white-space:nowrap;left:377.30px;transform-origin:0 50%;transform: scaleX(0.859);">0%</div>
<svg style="position:absolute;left:173.00px;top:152.00px" width="4" height="3" viewBox="0 0 4 3"><path d="M0.3 0.6 L2 2.2 L3.7 0.6" fill="none" stroke="#888" stroke-width="0.7"/></svg>
<div style="position:absolute;top:150.50px;font-size:7.6px;line-height:7.6px;color:#333;white-space:nowrap;left:179.70px;transform-origin:0 50%;transform: scaleX(0.978);">High Priority 3D</div>
<div style="position:absolute;top:151.20px;font-size:6.2px;line-height:6.2px;color:#a0a0a0;white-space:nowrap;left:268.80px;transform-origin:0 50%;transform: scaleX(0.887);">0%</div>
<svg style="position:absolute;left:281.00px;top:152.00px" width="4" height="3" viewBox="0 0 4 3"><path d="M0.3 0.6 L2 2.2 L3.7 0.6" fill="none" stroke="#888" stroke-width="0.7"/></svg>
<div style="position:absolute;top:150.50px;font-size:7.6px;line-height:7.6px;color:#333;white-space:nowrap;left:287.75px;transform-origin:0 50%;transform: scaleX(0.995);">High Priority Compute</div>
<div style="position:absolute;top:151.20px;font-size:6.2px;line-height:6.2px;color:#a0a0a0;white-space:nowrap;left:377.40px;transform-origin:0 50%;transform: scaleX(0.876);">0%</div>
<svg style="position:absolute;left:172.00px;top:103.85px" width="104.20" height="41.25" viewBox="15 28 757 300" preserveAspectRatio="none"><rect x="15" y="28" width="757" height="300" fill="#fff"/><line x1="15" y1="58.00" x2="772" y2="58.00" stroke="#f0f4f9" stroke-width="5.82"/><line x1="15" y1="88.00" x2="772" y2="88.00" stroke="#f0f4f9" stroke-width="5.82"/><line x1="15" y1="118.00" x2="772" y2="118.00" stroke="#f0f4f9" stroke-width="5.82"/><line x1="15" y1="148.00" x2="772" y2="148.00" stroke="#f0f4f9" stroke-width="5.82"/><line x1="15" y1="178.00" x2="772" y2="178.00" stroke="#f0f4f9" stroke-width="5.82"/><line x1="15" y1="208.00" x2="772" y2="208.00" stroke="#f0f4f9" stroke-width="5.82"/><line x1="15" y1="238.00" x2="772" y2="238.00" stroke="#f0f4f9" stroke-width="5.82"/><line x1="15" y1="268.00" x2="772" y2="268.00" stroke="#f0f4f9" stroke-width="5.82"/><line x1="15" y1="298.00" x2="772" y2="298.00" stroke="#f0f4f9" stroke-width="5.82"/><line x1="165.00" y1="28" x2="165.00" y2="328" stroke="#f0f4f9" stroke-width="5.81"/><line x1="291.17" y1="28" x2="291.17" y2="328" stroke="#f0f4f9" stroke-width="5.81"/><line x1="417.33" y1="28" x2="417.33" y2="328" stroke="#f0f4f9" stroke-width="5.81"/><line x1="543.50" y1="28" x2="543.50" y2="328" stroke="#f0f4f9" stroke-width="5.81"/><line x1="669.67" y1="28" x2="669.67" y2="328" stroke="#f0f4f9" stroke-width="5.81"/><path d="M15,325 L243,325 L258,95 L275,100 L292,88 L308,140 L325,80 L340,60 L352,70 L365,120 L375,125 L385,180 L398,160 L410,175 L425,215 L440,275 L452,255 L468,262 L480,255 L495,265 L512,265 L528,190 L540,140 L552,140 L565,310 L580,312 L600,315 L620,325 L640,318 L655,322 L678,298 L695,308 L715,308 L735,318 L750,312 L772,325 L772,328 L15,328Z" fill="#edf3f9"/><path d="M15,325 L243,325 L258,95 L275,100 L292,88 L308,140 L325,80 L340,60 L352,70 L365,120 L375,125 L385,180 L398,160 L410,175 L425,215 L440,275 L452,255 L468,262 L480,255 L495,265 L512,265 L528,190 L540,140 L552,140 L565,310 L580,312 L600,315 L620,325 L640,318 L655,322 L678,298 L695,308 L715,308 L735,318 L750,312 L772,325" fill="none" stroke="#a3bdd6" stroke-width="7.27" vector-effect="none"/><rect x="15" y="28" width="757" height="300" fill="none" stroke="#cddae7" stroke-width="13.09"/></svg>
<svg style="position:absolute;left:280.50px;top:103.85px" width="103.30" height="41.25" viewBox="15 28 757 300" preserveAspectRatio="none"><rect x="15" y="28" width="757" height="300" fill="#fff"/><line x1="15" y1="58.00" x2="772" y2="58.00" stroke="#f0f4f9" stroke-width="5.82"/><line x1="15" y1="88.00" x2="772" y2="88.00" stroke="#f0f4f9" stroke-width="5.82"/><line x1="15" y1="118.00" x2="772" y2="118.00" stroke="#f0f4f9" stroke-width="5.82"/><line x1="15" y1="148.00" x2="772" y2="148.00" stroke="#f0f4f9" stroke-width="5.82"/><line x1="15" y1="178.00" x2="772" y2="178.00" stroke="#f0f4f9" stroke-width="5.82"/><line x1="15" y1="208.00" x2="772" y2="208.00" stroke="#f0f4f9" stroke-width="5.82"/><line x1="15" y1="238.00" x2="772" y2="238.00" stroke="#f0f4f9" stroke-width="5.82"/><line x1="15" y1="268.00" x2="772" y2="268.00" stroke="#f0f4f9" stroke-width="5.82"/><line x1="15" y1="298.00" x2="772" y2="298.00" stroke="#f0f4f9" stroke-width="5.82"/><line x1="165.00" y1="28" x2="165.00" y2="328" stroke="#f0f4f9" stroke-width="5.86"/><line x1="291.17" y1="28" x2="291.17" y2="328" stroke="#f0f4f9" stroke-width="5.86"/><line x1="417.33" y1="28" x2="417.33" y2="328" stroke="#f0f4f9" stroke-width="5.86"/><line x1="543.50" y1="28" x2="543.50" y2="328" stroke="#f0f4f9" stroke-width="5.86"/><line x1="669.67" y1="28" x2="669.67" y2="328" stroke="#f0f4f9" stroke-width="5.86"/><path d="M15,325 L280,325 L300,318 L330,322 L380,320 L420,325 L460,322 L500,318 L540,322 L600,325 L772,325 L772,328 L15,328Z" fill="#eef4fa"/><path d="M15,325 L280,325 L300,318 L330,322 L380,320 L420,325 L460,322 L500,318 L540,322 L600,325 L772,325" fill="none" stroke="#a9c2da" stroke-width="7.27" vector-effect="none"/><rect x="15" y="28" width="757" height="300" fill="none" stroke="#cddae7" stroke-width="13.09"/></svg>
<svg style="position:absolute;left:172.00px;top:161.25px" width="104.20" height="41.25" viewBox="15 28 757 300" preserveAspectRatio="none"><rect x="15" y="28" width="757" height="300" fill="#fff"/><line x1="15" y1="58.00" x2="772" y2="58.00" stroke="#f0f4f9" stroke-width="5.82"/><line x1="15" y1="88.00" x2="772" y2="88.00" stroke="#f0f4f9" stroke-width="5.82"/><line x1="15" y1="118.00" x2="772" y2="118.00" stroke="#f0f4f9" stroke-width="5.82"/><line x1="15" y1="148.00" x2="772" y2="148.00" stroke="#f0f4f9" stroke-width="5.82"/><line x1="15" y1="178.00" x2="772" y2="178.00" stroke="#f0f4f9" stroke-width="5.82"/><line x1="15" y1="208.00" x2="772" y2="208.00" stroke="#f0f4f9" stroke-width="5.82"/><line x1="15" y1="238.00" x2="772" y2="238.00" stroke="#f0f4f9" stroke-width="5.82"/><line x1="15" y1="268.00" x2="772" y2="268.00" stroke="#f0f4f9" stroke-width="5.82"/><line x1="15" y1="298.00" x2="772" y2="298.00" stroke="#f0f4f9" stroke-width="5.82"/><line x1="165.00" y1="28" x2="165.00" y2="328" stroke="#f0f4f9" stroke-width="5.81"/><line x1="291.17" y1="28" x2="291.17" y2="328" stroke="#f0f4f9" stroke-width="5.81"/><line x1="417.33" y1="28" x2="417.33" y2="328" stroke="#f0f4f9" stroke-width="5.81"/><line x1="543.50" y1="28" x2="543.50" y2="328" stroke="#f0f4f9" stroke-width="5.81"/><line x1="669.67" y1="28" x2="669.67" y2="328" stroke="#f0f4f9" stroke-width="5.81"/><rect x="15" y="28" width="757" height="300" fill="none" stroke="#cddae7" stroke-width="13.09"/></svg>
<svg style="position:absolute;left:280.50px;top:161.25px" width="103.30" height="41.25" viewBox="15 28 757 300" preserveAspectRatio="none"><rect x="15" y="28" width="757" height="300" fill="#fff"/><line x1="15" y1="58.00" x2="772" y2="58.00" stroke="#f0f4f9" stroke-width="5.82"/><line x1="15" y1="88.00" x2="772" y2="88.00" stroke="#f0f4f9" stroke-width="5.82"/><line x1="15" y1="118.00" x2="772" y2="118.00" stroke="#f0f4f9" stroke-width="5.82"/><line x1="15" y1="148.00" x2="772" y2="148.00" stroke="#f0f4f9" stroke-width="5.82"/><line x1="15" y1="178.00" x2="772" y2="178.00" stroke="#f0f4f9" stroke-width="5.82"/><line x1="15" y1="208.00" x2="772" y2="208.00" stroke="#f0f4f9" stroke-width="5.82"/><line x1="15" y1="238.00" x2="772" y2="238.00" stroke="#f0f4f9" stroke-width="5.82"/><line x1="15" y1="268.00" x2="772" y2="268.00" stroke="#f0f4f9" stroke-width="5.82"/><line x1="15" y1="298.00" x2="772" y2="298.00" stroke="#f0f4f9" stroke-width="5.82"/><line x1="165.00" y1="28" x2="165.00" y2="328" stroke="#f0f4f9" stroke-width="5.86"/><line x1="291.17" y1="28" x2="291.17" y2="328" stroke="#f0f4f9" stroke-width="5.86"/><line x1="417.33" y1="28" x2="417.33" y2="328" stroke="#f0f4f9" stroke-width="5.86"/><line x1="543.50" y1="28" x2="543.50" y2="328" stroke="#f0f4f9" stroke-width="5.86"/><line x1="669.67" y1="28" x2="669.67" y2="328" stroke="#f0f4f9" stroke-width="5.86"/><rect x="15" y="28" width="757" height="300" fill="none" stroke="#cddae7" stroke-width="13.09"/></svg>
<div style="position:absolute;top:209.85px;font-size:6.8px;line-height:6.8px;color:#8a8a8a;white-space:nowrap;left:171.00px;transform-origin:0 50%;transform: scaleX(0.837);">Dedicated GPU memory usage</div>
<div style="position:absolute;top:210.05px;font-size:6.4px;line-height:6.4px;color:#8a8a8a;white-space:nowrap;right:414.80px;transform-origin:100% 50%;transform: scaleX(0.9);">512 MB</div>
<div style="position:absolute;top:259.30px;font-size:6.8px;line-height:6.8px;color:#8a8a8a;white-space:nowrap;left:171.00px;transform-origin:0 50%;transform: scaleX(0.837);">Shared GPU memory usage</div>
<div style="position:absolute;top:259.50px;font-size:6.4px;line-height:6.4px;color:#8a8a8a;white-space:nowrap;right:414.80px;transform-origin:100% 50%;transform: scaleX(0.9);">3.6 GB</div>
<svg style="position:absolute;left:170.80px;top:218.70px" width="214.40" height="37.50" viewBox="10 17 772 135" preserveAspectRatio="none"><rect x="10" y="17" width="772" height="135" fill="#fff"/><line x1="10" y1="30.50" x2="782" y2="30.50" stroke="#f0f4f9" stroke-width="2.88"/><line x1="10" y1="44.00" x2="782" y2="44.00" stroke="#f0f4f9" stroke-width="2.88"/><line x1="10" y1="57.50" x2="782" y2="57.50" stroke="#f0f4f9" stroke-width="2.88"/><line x1="10" y1="71.00" x2="782" y2="71.00" stroke="#f0f4f9" stroke-width="2.88"/><line x1="10" y1="84.50" x2="782" y2="84.50" stroke="#f0f4f9" stroke-width="2.88"/><line x1="10" y1="98.00" x2="782" y2="98.00" stroke="#f0f4f9" stroke-width="2.88"/><line x1="10" y1="111.50" x2="782" y2="111.50" stroke="#f0f4f9" stroke-width="2.88"/><line x1="10" y1="125.00" x2="782" y2="125.00" stroke="#f0f4f9" stroke-width="2.88"/><line x1="10" y1="138.50" x2="782" y2="138.50" stroke="#f0f4f9" stroke-width="2.88"/><line x1="165.00" y1="17" x2="165.00" y2="152" stroke="#f0f4f9" stroke-width="2.88"/><line x1="298.10" y1="17" x2="298.10" y2="152" stroke="#f0f4f9" stroke-width="2.88"/><line x1="431.21" y1="17" x2="431.21" y2="152" stroke="#f0f4f9" stroke-width="2.88"/><line x1="564.31" y1="17" x2="564.31" y2="152" stroke="#f0f4f9" stroke-width="2.88"/><line x1="697.41" y1="17" x2="697.41" y2="152" stroke="#f0f4f9" stroke-width="2.88"/><path d="M10,152 L245,152 L260,30 L300,33 L340,30 L355,37 L375,37 L390,30 L415,30 L430,42 L560,42 L690,37 L700,42 L740,42 L760,37 L782,37 L782,152 L10,152Z" fill="#edf3f9"/><path d="M10,152 L245,152 L260,30 L300,33 L340,30 L355,37 L375,37 L390,30 L415,30 L430,42 L560,42 L690,37 L700,42 L740,42 L760,37 L782,37" fill="none" stroke="#a3bdd6" stroke-width="3.60" vector-effect="none"/><rect x="10" y="17" width="772" height="135" fill="none" stroke="#cddae7" stroke-width="6.48"/></svg>
<svg style="position:absolute;left:170.80px;top:268.70px" width="214.40" height="37.00" viewBox="10 17 772 133" preserveAspectRatio="none"><rect x="10" y="17" width="772" height="133" fill="#fff"/><line x1="10" y1="30.30" x2="782" y2="30.30" stroke="#f0f4f9" stroke-width="2.88"/><line x1="10" y1="43.60" x2="782" y2="43.60" stroke="#f0f4f9" stroke-width="2.88"/><line x1="10" y1="56.90" x2="782" y2="56.90" stroke="#f0f4f9" stroke-width="2.88"/><line x1="10" y1="70.20" x2="782" y2="70.20" stroke="#f0f4f9" stroke-width="2.88"/><line x1="10" y1="83.50" x2="782" y2="83.50" stroke="#f0f4f9" stroke-width="2.88"/><line x1="10" y1="96.80" x2="782" y2="96.80" stroke="#f0f4f9" stroke-width="2.88"/><line x1="10" y1="110.10" x2="782" y2="110.10" stroke="#f0f4f9" stroke-width="2.88"/><line x1="10" y1="123.40" x2="782" y2="123.40" stroke="#f0f4f9" stroke-width="2.88"/><line x1="10" y1="136.70" x2="782" y2="136.70" stroke="#f0f4f9" stroke-width="2.88"/><line x1="165.00" y1="17" x2="165.00" y2="150" stroke="#f0f4f9" stroke-width="2.88"/><line x1="298.10" y1="17" x2="298.10" y2="150" stroke="#f0f4f9" stroke-width="2.88"/><line x1="431.21" y1="17" x2="431.21" y2="150" stroke="#f0f4f9" stroke-width="2.88"/><line x1="564.31" y1="17" x2="564.31" y2="150" stroke="#f0f4f9" stroke-width="2.88"/><line x1="697.41" y1="17" x2="697.41" y2="150" stroke="#f0f4f9" stroke-width="2.88"/><path d="M10,150 L245,150 L260,93 L430,97 L620,98 L638,113 L655,105 L690,101 L782,101 L782,150 L10,150Z" fill="#edf3f9"/><path d="M10,150 L245,150 L260,93 L430,97 L620,98 L638,113 L655,105 L690,101 L782,101" fill="none" stroke="#a3bdd6" stroke-width="3.59" vector-effect="none"/><rect x="10" y="17" width="772" height="133" fill="none" stroke="#cddae7" stroke-width="6.47"/></svg>
<div style="position:absolute;left:0;top:0;width:800px;height:450px;clip-path:inset(0 0 129px 0);">
<div style="position:absolute;top:317.80px;font-size:7.4px;line-height:7.4px;color:#777;white-space:nowrap;left:170.00px;transform-origin:0 50%;transform: scaleX(0.92);">Utilization</div>
<div style="position:absolute;top:317.80px;font-size:7.4px;line-height:7.4px;color:#777;white-space:nowrap;left:232.00px;transform-origin:0 50%;transform: scaleX(0.885);">Dedicated GPU memory</div>
<div style="position:absolute;top:317.80px;font-size:7.4px;line-height:7.4px;color:#777;white-space:nowrap;left:310.00px;transform-origin:0 50%;transform: scaleX(0.891);">Driver version:</div>
</div>
<div style="position:absolute;left:400.00px;top:60.70px;width:8.50px;height:260.00px;background:#f0f0f0;"></div>
<div style="position:absolute;left:401.90px;top:70.00px;width:5.30px;height:181.70px;background:#8a8a8a;"></div>
<svg style="position:absolute;left:44px;top:333px" width="5" height="3" viewBox="0 0 5 3"><path d="M0.4 2.5 L2.5 0.5 L4.6 2.5" fill="none" stroke="#555" stroke-width="0.7"/></svg>
<div style="position:absolute;top:331.30px;font-size:7.4px;line-height:7.4px;color:#333;white-space:nowrap;left:56.25px;transform-origin:0 50%;transform: scaleX(0.881);">Fewer details</div>
<svg style="position:absolute;left:104px;top:331px" width="7" height="7" viewBox="0 0 7 7"><circle cx="3.5" cy="3.5" r="3" fill="#d8b0b0" stroke="#a05050" stroke-width="0.8"/><circle cx="3.5" cy="3.5" r="1.2" fill="#c33"/></svg>
<div style="position:absolute;top:331.30px;font-size:7.4px;line-height:7.4px;color:#3b62b5;white-space:nowrap;left:113.75px;transform-origin:0 50%;transform: scaleX(0.901);">Open Resource Monitor</div>
<div style="position:absolute;left:504.00px;top:23.30px;width:278.70px;height:358.50px;background:#000;border-radius:4px 4px 0 0;box-shadow:0 0 2px rgba(0,0,0,.8);"></div>
<svg style="position:absolute;left:507px;top:26.5px" width="9" height="9" viewBox="0 0 9 9"><rect x="0.5" y="0.5" width="8" height="3" fill="#7fb6e6"/><rect x="1" y="4" width="7" height="4.5" fill="#d8e8f5"/><rect x="2" y="5" width="1.2" height="1.2" fill="#4a8acb"/><rect x="4" y="5" width="1.2" height="1.2" fill="#4a8acb"/><rect x="6" y="5" width="1.2" height="1.2" fill="#4a8acb"/><rect x="2" y="7" width="1.2" height="1.2" fill="#4a8acb"/><rect x="4" y="7" width="1.2" height="1.2" fill="#4a8acb"/><rect x="6" y="7" width="1.2" height="1.2" fill="#4a8acb"/></svg>
<div style="position:absolute;top:27.30px;font-size:7.0px;line-height:7.0px;color:#f2f2f2;white-space:nowrap;left:517.00px;transform-origin:0 50%;transform: scaleX(0.93);-webkit-text-stroke:0.2px #f2f2f2;">HWiNFO64 v7.24-4770 - Sensors Status</div>
<div style="position:absolute;left:715.50px;top:30.20px;width:6.00px;height:0.90px;background:#ddd;"></div>
<div style="position:absolute;left:741.5px;top:27.5px;width:6px;height:6px;border:0.9px solid #ddd;border-radius:1px;"></div>
<svg style="position:absolute;left:767px;top:27px" width="7" height="7" viewBox="0 0 7 7"><path d="M0.5 0.5L6.5 6.5M6.5 0.5L0.5 6.5" stroke="#ddd" stroke-width="0.9"/></svg>
<div style="position:absolute;left:504.00px;top:37.50px;width:264.30px;height:10.00px;background:#1b1b1b;"></div>
<div style="position:absolute;left:601.00px;top:37.50px;width:0.70px;height:10.00px;background:#2e2e2e;"></div>
<div style="position:absolute;top:39.20px;font-size:7.0px;line-height:7.0px;color:#e6e6e6;white-space:nowrap;left:505.80px;transform-origin:0 50%;transform: scaleX(0.85);-webkit-text-stroke:0.2px #e6e6e6;">Sensor</div>
<div style="position:absolute;top:39.20px;font-size:7.0px;line-height:7.0px;color:#e6e6e6;white-space:nowrap;right:158.70px;transform-origin:100% 50%;transform: scaleX(0.85);-webkit-text-stroke:0.2px #e6e6e6;">Current</div>
<div style="position:absolute;top:39.20px;font-size:7.0px;line-height:7.0px;color:#e6e6e6;white-space:nowrap;right:116.70px;transform-origin:100% 50%;transform: scaleX(0.85);-webkit-text-stroke:0.2px #e6e6e6;">Minimum</div>
<div style="position:absolute;top:39.20px;font-size:7.0px;line-height:7.0px;color:#e6e6e6;white-space:nowrap;right:74.70px;transform-origin:100% 50%;transform: scaleX(0.85);-webkit-text-stroke:0.2px #e6e6e6;">Maximum</div>
<div style="position:absolute;top:39.20px;font-size:7.0px;line-height:7.0px;color:#e6e6e6;white-space:nowrap;right:32.80px;transform-origin:100% 50%;transform: scaleX(0.85);-webkit-text-stroke:0.2px #e6e6e6;">Average</div>
<div style="position:absolute;left:0;top:0;width:800px;height:450px;clip-path:inset(47.5px 0 93.30000000000001px 0);">
<div style="position:absolute;left:523.30px;top:47.50px;width:245.00px;height:9.22px;background:#1c1c1c;"></div>
<div style="position:absolute;left:517.80px;top:48.31px;width:2.6px;height:7.4px;background:linear-gradient(#e8d0d0 0,#e8d0d0 18%,#c0303c 30%,#a82030 100%);border-radius:1px;"></div>
<div style="position:absolute;top:48.61px;font-size:7.0px;line-height:7.0px;color:#e6e6e6;white-space:nowrap;right:158.00px;transform-origin:100% 50%;transform: scaleX(0.85);-webkit-text-stroke:0.2px #e6e6e6;">79.5 °C</div>
<div style="position:absolute;top:48.61px;font-size:7.0px;line-height:7.0px;color:#e6e6e6;white-space:nowrap;right:116.50px;transform-origin:100% 50%;transform: scaleX(0.85);-webkit-text-stroke:0.2px #e6e6e6;">74.6 °C</div>
<div style="position:absolute;top:48.61px;font-size:7.0px;line-height:7.0px;color:#e8565a;white-space:nowrap;right:74.50px;transform-origin:100% 50%;transform: scaleX(0.85);-webkit-text-stroke:0.2px #e8565a;">95.9 °C</div>
<div style="position:absolute;top:48.61px;font-size:7.0px;line-height:7.0px;color:#e6e6e6;white-space:nowrap;right:33.00px;transform-origin:100% 50%;transform: scaleX(0.85);-webkit-text-stroke:0.2px #e6e6e6;">81.5 °C</div>
<div style="position:absolute;left:517.80px;top:57.54px;width:2.6px;height:7.4px;background:linear-gradient(#e8d0d0 0,#e8d0d0 18%,#c0303c 30%,#a82030 100%);border-radius:1px;"></div>
<div style="position:absolute;top:57.84px;font-size:7.0px;line-height:7.0px;color:#e6e6e6;white-space:nowrap;right:158.00px;transform-origin:100% 50%;transform: scaleX(0.85);-webkit-text-stroke:0.2px #e6e6e6;">77.1 °C</div>
<div style="position:absolute;top:57.84px;font-size:7.0px;line-height:7.0px;color:#e6e6e6;white-space:nowrap;right:116.50px;transform-origin:100% 50%;transform: scaleX(0.85);-webkit-text-stroke:0.2px #e6e6e6;">73.7 °C</div>
<div style="position:absolute;top:57.84px;font-size:7.0px;line-height:7.0px;color:#e6e6e6;white-space:nowrap;right:74.50px;transform-origin:100% 50%;transform: scaleX(0.85);-webkit-text-stroke:0.2px #e6e6e6;">95.0 °C</div>
<div style="position:absolute;top:57.84px;font-size:7.0px;line-height:7.0px;color:#e6e6e6;white-space:nowrap;right:33.00px;transform-origin:100% 50%;transform: scaleX(0.85);-webkit-text-stroke:0.2px #e6e6e6;">80.7 °C</div>
<div style="position:absolute;left:523.30px;top:65.95px;width:245.00px;height:9.22px;background:#1c1c1c;"></div>
<div style="position:absolute;left:517.80px;top:66.76px;width:2.6px;height:7.4px;background:linear-gradient(#e8d0d0 0,#e8d0d0 18%,#c0303c 30%,#a82030 100%);border-radius:1px;"></div>
<div style="position:absolute;top:67.06px;font-size:7.0px;line-height:7.0px;color:#e6e6e6;white-space:nowrap;right:158.00px;transform-origin:100% 50%;transform: scaleX(0.85);-webkit-text-stroke:0.2px #e6e6e6;">71.6 °C</div>
<div style="position:absolute;top:67.06px;font-size:7.0px;line-height:7.0px;color:#e6e6e6;white-space:nowrap;right:116.50px;transform-origin:100% 50%;transform: scaleX(0.85);-webkit-text-stroke:0.2px #e6e6e6;">71.2 °C</div>
<div style="position:absolute;top:67.06px;font-size:7.0px;line-height:7.0px;color:#e6e6e6;white-space:nowrap;right:74.50px;transform-origin:100% 50%;transform: scaleX(0.85);-webkit-text-stroke:0.2px #e6e6e6;">86.5 °C</div>
<div style="position:absolute;top:67.06px;font-size:7.0px;line-height:7.0px;color:#e6e6e6;white-space:nowrap;right:33.00px;transform-origin:100% 50%;transform: scaleX(0.85);-webkit-text-stroke:0.2px #e6e6e6;">76.9 °C</div>
<div style="position:absolute;left:517.80px;top:75.99px;width:2.6px;height:7.4px;background:linear-gradient(#e8d0d0 0,#e8d0d0 18%,#c0303c 30%,#a82030 100%);border-radius:1px;"></div>
<div style="position:absolute;top:76.29px;font-size:7.0px;line-height:7.0px;color:#e6e6e6;white-space:nowrap;right:158.00px;transform-origin:100% 50%;transform: scaleX(0.85);-webkit-text-stroke:0.2px #e6e6e6;">71.6 °C</div>
<div style="position:absolute;top:76.29px;font-size:7.0px;line-height:7.0px;color:#e6e6e6;white-space:nowrap;right:116.50px;transform-origin:100% 50%;transform: scaleX(0.85);-webkit-text-stroke:0.2px #e6e6e6;">70.3 °C</div>
<div style="position:absolute;top:76.29px;font-size:7.0px;line-height:7.0px;color:#e6e6e6;white-space:nowrap;right:74.50px;transform-origin:100% 50%;transform: scaleX(0.85);-webkit-text-stroke:0.2px #e6e6e6;">88.5 °C</div>
<div style="position:absolute;top:76.29px;font-size:7.0px;line-height:7.0px;color:#e6e6e6;white-space:nowrap;right:33.00px;transform-origin:100% 50%;transform: scaleX(0.85);-webkit-text-stroke:0.2px #e6e6e6;">76.9 °C</div>
<div style="position:absolute;left:523.30px;top:84.40px;width:245.00px;height:9.22px;background:#1c1c1c;"></div>
<div style="position:absolute;left:517.80px;top:85.21px;width:2.6px;height:7.4px;background:linear-gradient(#e8d0d0 0,#e8d0d0 18%,#c0303c 30%,#a82030 100%);border-radius:1px;"></div>
<div style="position:absolute;top:85.51px;font-size:7.0px;line-height:7.0px;color:#e6e6e6;white-space:nowrap;right:158.00px;transform-origin:100% 50%;transform: scaleX(0.85);-webkit-text-stroke:0.2px #e6e6e6;">34.8 °C</div>
<div style="position:absolute;top:85.51px;font-size:7.0px;line-height:7.0px;color:#e6e6e6;white-space:nowrap;right:116.50px;transform-origin:100% 50%;transform: scaleX(0.85);-webkit-text-stroke:0.2px #e6e6e6;">33.5 °C</div>
<div style="position:absolute;top:85.51px;font-size:7.0px;line-height:7.0px;color:#e6e6e6;white-space:nowrap;right:74.50px;transform-origin:100% 50%;transform: scaleX(0.85);-webkit-text-stroke:0.2px #e6e6e6;">38.0 °C</div>
<div style="position:absolute;top:85.51px;font-size:7.0px;line-height:7.0px;color:#e6e6e6;white-space:nowrap;right:33.00px;transform-origin:100% 50%;transform: scaleX(0.85);-webkit-text-stroke:0.2px #e6e6e6;">36.5 °C</div>
<svg style="position:absolute;left:516.5px;top:95.74px" width="4" height="5" viewBox="0 0 4 5"><path d="M0.6 0.5 L3 2.5 L0.6 4.5" fill="none" stroke="#e0e0e0" stroke-width="0.9"/></svg>
<div style="position:absolute;left:527.30px;top:94.44px;width:2.6px;height:7.4px;background:linear-gradient(#e8d0d0 0,#e8d0d0 18%,#c0303c 30%,#a82030 100%);border-radius:1px;"></div>
<div style="position:absolute;top:94.74px;font-size:7.0px;line-height:7.0px;color:#e6e6e6;white-space:nowrap;right:158.00px;transform-origin:100% 50%;transform: scaleX(0.85);-webkit-text-stroke:0.2px #e6e6e6;">71.6 °C</div>
<div style="position:absolute;top:94.74px;font-size:7.0px;line-height:7.0px;color:#e6e6e6;white-space:nowrap;right:116.50px;transform-origin:100% 50%;transform: scaleX(0.85);-webkit-text-stroke:0.2px #e6e6e6;">67.5 °C</div>
<div style="position:absolute;top:94.74px;font-size:7.0px;line-height:7.0px;color:#e6e6e6;white-space:nowrap;right:74.50px;transform-origin:100% 50%;transform: scaleX(0.85);-webkit-text-stroke:0.2px #e6e6e6;">93.8 °C</div>
<div style="position:absolute;top:94.74px;font-size:7.0px;line-height:7.0px;color:#e6e6e6;white-space:nowrap;right:33.00px;transform-origin:100% 50%;transform: scaleX(0.85);-webkit-text-stroke:0.2px #e6e6e6;">76.0 °C</div>
<div style="position:absolute;left:523.30px;top:102.85px;width:245.00px;height:9.22px;background:#1c1c1c;"></div>
<div style="position:absolute;left:517.80px;top:103.66px;width:2.6px;height:7.4px;background:linear-gradient(#e8d0d0 0,#e8d0d0 18%,#c0303c 30%,#a82030 100%);border-radius:1px;"></div>
<div style="position:absolute;top:103.96px;font-size:7.0px;line-height:7.0px;color:#e6e6e6;white-space:nowrap;right:158.00px;transform-origin:100% 50%;transform: scaleX(0.85);-webkit-text-stroke:0.2px #e6e6e6;">72.0 °C</div>
<div style="position:absolute;top:103.96px;font-size:7.0px;line-height:7.0px;color:#e6e6e6;white-space:nowrap;right:116.50px;transform-origin:100% 50%;transform: scaleX(0.85);-webkit-text-stroke:0.2px #e6e6e6;">70.2 °C</div>
<div style="position:absolute;top:103.96px;font-size:7.0px;line-height:7.0px;color:#e6e6e6;white-space:nowrap;right:74.50px;transform-origin:100% 50%;transform: scaleX(0.85);-webkit-text-stroke:0.2px #e6e6e6;">86.6 °C</div>
<div style="position:absolute;top:103.96px;font-size:7.0px;line-height:7.0px;color:#e6e6e6;white-space:nowrap;right:33.00px;transform-origin:100% 50%;transform: scaleX(0.85);-webkit-text-stroke:0.2px #e6e6e6;">76.3 °C</div>
<svg style="position:absolute;left:516.80px;top:112.89px" width="5" height="7.6" viewBox="0 0 5 8"><path d="M2.2 0 L5 0 L3.4 3 L4.8 3 L0.6 8 L1.6 4.2 L0.2 4.2Z" fill="#f2c21b"/></svg>
<div style="position:absolute;top:113.19px;font-size:7.0px;line-height:7.0px;color:#e6e6e6;white-space:nowrap;right:158.00px;transform-origin:100% 50%;transform: scaleX(0.85);-webkit-text-stroke:0.2px #e6e6e6;">1.120 V</div>
<div style="position:absolute;top:113.19px;font-size:7.0px;line-height:7.0px;color:#e6e6e6;white-space:nowrap;right:116.50px;transform-origin:100% 50%;transform: scaleX(0.85);-webkit-text-stroke:0.2px #e6e6e6;">0.918 V</div>
<div style="position:absolute;top:113.19px;font-size:7.0px;line-height:7.0px;color:#e6e6e6;white-space:nowrap;right:74.50px;transform-origin:100% 50%;transform: scaleX(0.85);-webkit-text-stroke:0.2px #e6e6e6;">1.187 V</div>
<div style="position:absolute;top:113.19px;font-size:7.0px;line-height:7.0px;color:#e6e6e6;white-space:nowrap;right:33.00px;transform-origin:100% 50%;transform: scaleX(0.85);-webkit-text-stroke:0.2px #e6e6e6;">1.006 V</div>
<div style="position:absolute;left:523.30px;top:121.30px;width:245.00px;height:9.22px;background:#1c1c1c;"></div>
<svg style="position:absolute;left:516.80px;top:122.11px" width="5" height="7.6" viewBox="0 0 5 8"><path d="M2.2 0 L5 0 L3.4 3 L4.8 3 L0.6 8 L1.6 4.2 L0.2 4.2Z" fill="#f2c21b"/></svg>
<div style="position:absolute;top:122.41px;font-size:7.0px;line-height:7.0px;color:#e6e6e6;white-space:nowrap;right:158.00px;transform-origin:100% 50%;transform: scaleX(0.85);-webkit-text-stroke:0.2px #e6e6e6;">0.942 V</div>
<div style="position:absolute;top:122.41px;font-size:7.0px;line-height:7.0px;color:#e6e6e6;white-space:nowrap;right:116.50px;transform-origin:100% 50%;transform: scaleX(0.85);-webkit-text-stroke:0.2px #e6e6e6;">0.783 V</div>
<div style="position:absolute;top:122.41px;font-size:7.0px;line-height:7.0px;color:#e6e6e6;white-space:nowrap;right:74.50px;transform-origin:100% 50%;transform: scaleX(0.85);-webkit-text-stroke:0.2px #e6e6e6;">0.950 V</div>
<div style="position:absolute;top:122.41px;font-size:7.0px;line-height:7.0px;color:#e6e6e6;white-space:nowrap;right:33.00px;transform-origin:100% 50%;transform: scaleX(0.85);-webkit-text-stroke:0.2px #e6e6e6;">0.937 V</div>
<svg style="position:absolute;left:516.80px;top:131.34px" width="5" height="7.6" viewBox="0 0 5 8"><path d="M2.2 0 L5 0 L3.4 3 L4.8 3 L0.6 8 L1.6 4.2 L0.2 4.2Z" fill="#f2c21b"/></svg>
<div style="position:absolute;top:131.64px;font-size:7.0px;line-height:7.0px;color:#e6e6e6;white-space:nowrap;right:158.00px;transform-origin:100% 50%;transform: scaleX(0.85);-webkit-text-stroke:0.2px #e6e6e6;">0.942 V</div>
<div style="position:absolute;top:131.64px;font-size:7.0px;line-height:7.0px;color:#e6e6e6;white-space:nowrap;right:116.50px;transform-origin:100% 50%;transform: scaleX(0.85);-webkit-text-stroke:0.2px #e6e6e6;">0.783 V</div>
<div style="position:absolute;top:131.64px;font-size:7.0px;line-height:7.0px;color:#e6e6e6;white-space:nowrap;right:74.50px;transform-origin:100% 50%;transform: scaleX(0.85);-webkit-text-stroke:0.2px #e6e6e6;">0.950 V</div>
<div style="position:absolute;top:131.64px;font-size:7.0px;line-height:7.0px;color:#e6e6e6;white-space:nowrap;right:33.00px;transform-origin:100% 50%;transform: scaleX(0.85);-webkit-text-stroke:0.2px #e6e6e6;">0.938 V</div>
<div style="position:absolute;left:523.30px;top:139.75px;width:245.00px;height:9.22px;background:#1c1c1c;"></div>
<svg style="position:absolute;left:516.80px;top:140.56px" width="5" height="7.6" viewBox="0 0 5 8"><path d="M2.2 0 L5 0 L3.4 3 L4.8 3 L0.6 8 L1.6 4.2 L0.2 4.2Z" fill="#f2c21b"/></svg>
<div style="position:absolute;top:140.86px;font-size:7.0px;line-height:7.0px;color:#e6e6e6;white-space:nowrap;right:158.00px;transform-origin:100% 50%;transform: scaleX(0.85);-webkit-text-stroke:0.2px #e6e6e6;">13.427 A</div>
<div style="position:absolute;top:140.86px;font-size:7.0px;line-height:7.0px;color:#e6e6e6;white-space:nowrap;right:116.50px;transform-origin:100% 50%;transform: scaleX(0.85);-webkit-text-stroke:0.2px #e6e6e6;">5.869 A</div>
<div style="position:absolute;top:140.86px;font-size:7.0px;line-height:7.0px;color:#e6e6e6;white-space:nowrap;right:74.50px;transform-origin:100% 50%;transform: scaleX(0.85);-webkit-text-stroke:0.2px #e6e6e6;">20.044 A</div>
<div style="position:absolute;top:140.86px;font-size:7.0px;line-height:7.0px;color:#e6e6e6;white-space:nowrap;right:33.00px;transform-origin:100% 50%;transform: scaleX(0.85);-webkit-text-stroke:0.2px #e6e6e6;">13.985 A</div>
<svg style="position:absolute;left:516.80px;top:149.79px" width="5" height="7.6" viewBox="0 0 5 8"><path d="M2.2 0 L5 0 L3.4 3 L4.8 3 L0.6 8 L1.6 4.2 L0.2 4.2Z" fill="#f2c21b"/></svg>
<div style="position:absolute;top:150.09px;font-size:7.0px;line-height:7.0px;color:#e6e6e6;white-space:nowrap;right:158.00px;transform-origin:100% 50%;transform: scaleX(0.85);-webkit-text-stroke:0.2px #e6e6e6;">2.954 A</div>
<div style="position:absolute;top:150.09px;font-size:7.0px;line-height:7.0px;color:#e6e6e6;white-space:nowrap;right:116.50px;transform-origin:100% 50%;transform: scaleX(0.85);-webkit-text-stroke:0.2px #e6e6e6;">1.427 A</div>
<div style="position:absolute;top:150.09px;font-size:7.0px;line-height:7.0px;color:#e6e6e6;white-space:nowrap;right:74.50px;transform-origin:100% 50%;transform: scaleX(0.85);-webkit-text-stroke:0.2px #e6e6e6;">4.495 A</div>
<div style="position:absolute;top:150.09px;font-size:7.0px;line-height:7.0px;color:#e6e6e6;white-space:nowrap;right:33.00px;transform-origin:100% 50%;transform: scaleX(0.85);-webkit-text-stroke:0.2px #e6e6e6;">3.320 A</div>
<div style="position:absolute;left:523.30px;top:158.20px;width:245.00px;height:9.22px;background:#1c1c1c;"></div>
<svg style="position:absolute;left:516.80px;top:159.01px" width="5" height="7.6" viewBox="0 0 5 8"><path d="M2.2 0 L5 0 L3.4 3 L4.8 3 L0.6 8 L1.6 4.2 L0.2 4.2Z" fill="#f2c21b"/></svg>
<div style="position:absolute;top:159.31px;font-size:7.0px;line-height:7.0px;color:#e6e6e6;white-space:nowrap;right:158.00px;transform-origin:100% 50%;transform: scaleX(0.85);-webkit-text-stroke:0.2px #e6e6e6;">13.433 A</div>
<div style="position:absolute;top:159.31px;font-size:7.0px;line-height:7.0px;color:#e6e6e6;white-space:nowrap;right:116.50px;transform-origin:100% 50%;transform: scaleX(0.85);-webkit-text-stroke:0.2px #e6e6e6;">5.987 A</div>
<div style="position:absolute;top:159.31px;font-size:7.0px;line-height:7.0px;color:#e6e6e6;white-space:nowrap;right:74.50px;transform-origin:100% 50%;transform: scaleX(0.85);-webkit-text-stroke:0.2px #e6e6e6;">19.945 A</div>
<div style="position:absolute;top:159.31px;font-size:7.0px;line-height:7.0px;color:#e6e6e6;white-space:nowrap;right:33.00px;transform-origin:100% 50%;transform: scaleX(0.85);-webkit-text-stroke:0.2px #e6e6e6;">13.987 A</div>
<svg style="position:absolute;left:516.80px;top:168.24px" width="5" height="7.6" viewBox="0 0 5 8"><path d="M2.2 0 L5 0 L3.4 3 L4.8 3 L0.6 8 L1.6 4.2 L0.2 4.2Z" fill="#f2c21b"/></svg>
<div style="position:absolute;top:168.54px;font-size:7.0px;line-height:7.0px;color:#e6e6e6;white-space:nowrap;right:158.00px;transform-origin:100% 50%;transform: scaleX(0.85);-webkit-text-stroke:0.2px #e6e6e6;">80.077 A</div>
<div style="position:absolute;top:168.54px;font-size:7.0px;line-height:7.0px;color:#e6e6e6;white-space:nowrap;right:116.50px;transform-origin:100% 50%;transform: scaleX(0.85);-webkit-text-stroke:0.2px #e6e6e6;">49.741 A</div>
<div style="position:absolute;top:168.54px;font-size:7.0px;line-height:7.0px;color:#e6e6e6;white-space:nowrap;right:74.50px;transform-origin:100% 50%;transform: scaleX(0.85);-webkit-text-stroke:0.2px #e6e6e6;">85.897 A</div>
<div style="position:absolute;top:168.54px;font-size:7.0px;line-height:7.0px;color:#e6e6e6;white-space:nowrap;right:33.00px;transform-origin:100% 50%;transform: scaleX(0.85);-webkit-text-stroke:0.2px #e6e6e6;">64.103 A</div>
<div style="position:absolute;left:523.30px;top:176.65px;width:245.00px;height:9.22px;background:#1c1c1c;"></div>
<svg style="position:absolute;left:516.80px;top:177.46px" width="5" height="7.6" viewBox="0 0 5 8"><path d="M2.2 0 L5 0 L3.4 3 L4.8 3 L0.6 8 L1.6 4.2 L0.2 4.2Z" fill="#f2c21b"/></svg>
<div style="position:absolute;top:177.76px;font-size:7.0px;line-height:7.0px;color:#e6e6e6;white-space:nowrap;right:158.00px;transform-origin:100% 50%;transform: scaleX(0.85);-webkit-text-stroke:0.2px #e6e6e6;">20.112 W</div>
<div style="position:absolute;top:177.76px;font-size:7.0px;line-height:7.0px;color:#e6e6e6;white-space:nowrap;right:116.50px;transform-origin:100% 50%;transform: scaleX(0.85);-webkit-text-stroke:0.2px #e6e6e6;">9.655 W</div>
<div style="position:absolute;top:177.76px;font-size:7.0px;line-height:7.0px;color:#e6e6e6;white-space:nowrap;right:74.50px;transform-origin:100% 50%;transform: scaleX(0.85);-webkit-text-stroke:0.2px #e6e6e6;">25.964 W</div>
<div style="position:absolute;top:177.76px;font-size:7.0px;line-height:7.0px;color:#e6e6e6;white-space:nowrap;right:33.00px;transform-origin:100% 50%;transform: scaleX(0.85);-webkit-text-stroke:0.2px #e6e6e6;">19.549 W</div>
<svg style="position:absolute;left:516.5px;top:187.99px" width="4" height="5" viewBox="0 0 4 5"><path d="M0.6 0.5 L3 2.5 L0.6 4.5" fill="none" stroke="#e0e0e0" stroke-width="0.9"/></svg>
<svg style="position:absolute;left:526.30px;top:186.69px" width="5" height="7.6" viewBox="0 0 5 8"><path d="M2.2 0 L5 0 L3.4 3 L4.8 3 L0.6 8 L1.6 4.2 L0.2 4.2Z" fill="#f2c21b"/></svg>
<div style="position:absolute;top:186.99px;font-size:7.0px;line-height:7.0px;color:#e6e6e6;white-space:nowrap;right:158.00px;transform-origin:100% 50%;transform: scaleX(0.85);-webkit-text-stroke:0.2px #e6e6e6;">0.961 W</div>
<div style="position:absolute;top:186.99px;font-size:7.0px;line-height:7.0px;color:#e6e6e6;white-space:nowrap;right:116.50px;transform-origin:100% 50%;transform: scaleX(0.85);-webkit-text-stroke:0.2px #e6e6e6;">0.324 W</div>
<div style="position:absolute;top:186.99px;font-size:7.0px;line-height:7.0px;color:#e6e6e6;white-space:nowrap;right:74.50px;transform-origin:100% 50%;transform: scaleX(0.85);-webkit-text-stroke:0.2px #e6e6e6;">4.495 W</div>
<div style="position:absolute;top:186.99px;font-size:7.0px;line-height:7.0px;color:#e6e6e6;white-space:nowrap;right:33.00px;transform-origin:100% 50%;transform: scaleX(0.85);-webkit-text-stroke:0.2px #e6e6e6;">0.830 W</div>
<div style="position:absolute;left:523.30px;top:195.10px;width:245.00px;height:9.22px;background:#1c1c1c;"></div>
<svg style="position:absolute;left:516.80px;top:195.91px" width="5" height="7.6" viewBox="0 0 5 8"><path d="M2.2 0 L5 0 L3.4 3 L4.8 3 L0.6 8 L1.6 4.2 L0.2 4.2Z" fill="#f2c21b"/></svg>
<div style="position:absolute;top:196.21px;font-size:7.0px;line-height:7.0px;color:#e6e6e6;white-space:nowrap;right:158.00px;transform-origin:100% 50%;transform: scaleX(0.85);-webkit-text-stroke:0.2px #e6e6e6;">15.210 W</div>
<div style="position:absolute;top:196.21px;font-size:7.0px;line-height:7.0px;color:#e6e6e6;white-space:nowrap;right:116.50px;transform-origin:100% 50%;transform: scaleX(0.85);-webkit-text-stroke:0.2px #e6e6e6;">6.979 W</div>
<div style="position:absolute;top:196.21px;font-size:7.0px;line-height:7.0px;color:#e6e6e6;white-space:nowrap;right:74.50px;transform-origin:100% 50%;transform: scaleX(0.85);-webkit-text-stroke:0.2px #e6e6e6;">20.110 W</div>
<div style="position:absolute;top:196.21px;font-size:7.0px;line-height:7.0px;color:#e6e6e6;white-space:nowrap;right:33.00px;transform-origin:100% 50%;transform: scaleX(0.85);-webkit-text-stroke:0.2px #e6e6e6;">14.223 W</div>
<svg style="position:absolute;left:516.80px;top:205.14px" width="5" height="7.6" viewBox="0 0 5 8"><path d="M2.2 0 L5 0 L3.4 3 L4.8 3 L0.6 8 L1.6 4.2 L0.2 4.2Z" fill="#f2c21b"/></svg>
<div style="position:absolute;top:205.44px;font-size:7.0px;line-height:7.0px;color:#e6e6e6;white-space:nowrap;right:158.00px;transform-origin:100% 50%;transform: scaleX(0.85);-webkit-text-stroke:0.2px #e6e6e6;">2.792 W</div>
<div style="position:absolute;top:205.44px;font-size:7.0px;line-height:7.0px;color:#e6e6e6;white-space:nowrap;right:116.50px;transform-origin:100% 50%;transform: scaleX(0.85);-webkit-text-stroke:0.2px #e6e6e6;">1.160 W</div>
<div style="position:absolute;top:205.44px;font-size:7.0px;line-height:7.0px;color:#e6e6e6;white-space:nowrap;right:74.50px;transform-origin:100% 50%;transform: scaleX(0.85);-webkit-text-stroke:0.2px #e6e6e6;">4.264 W</div>
<div style="position:absolute;top:205.44px;font-size:7.0px;line-height:7.0px;color:#e6e6e6;white-space:nowrap;right:33.00px;transform-origin:100% 50%;transform: scaleX(0.85);-webkit-text-stroke:0.2px #e6e6e6;">3.131 W</div>
<div style="position:absolute;left:523.30px;top:213.55px;width:245.00px;height:9.22px;background:#1c1c1c;"></div>
<svg style="position:absolute;left:516.80px;top:214.36px" width="5" height="7.6" viewBox="0 0 5 8"><path d="M2.2 0 L5 0 L3.4 3 L4.8 3 L0.6 8 L1.6 4.2 L0.2 4.2Z" fill="#f2c21b"/></svg>
<div style="position:absolute;top:214.66px;font-size:7.0px;line-height:7.0px;color:#e6e6e6;white-space:nowrap;right:158.00px;transform-origin:100% 50%;transform: scaleX(0.85);-webkit-text-stroke:0.2px #e6e6e6;">18.450 W</div>
<div style="position:absolute;top:214.66px;font-size:7.0px;line-height:7.0px;color:#e6e6e6;white-space:nowrap;right:116.50px;transform-origin:100% 50%;transform: scaleX(0.85);-webkit-text-stroke:0.2px #e6e6e6;">8.468 W</div>
<div style="position:absolute;top:214.66px;font-size:7.0px;line-height:7.0px;color:#e6e6e6;white-space:nowrap;right:74.50px;transform-origin:100% 50%;transform: scaleX(0.85);-webkit-text-stroke:0.2px #e6e6e6;">23.893 W</div>
<div style="position:absolute;top:214.66px;font-size:7.0px;line-height:7.0px;color:#e6e6e6;white-space:nowrap;right:33.00px;transform-origin:100% 50%;transform: scaleX(0.85);-webkit-text-stroke:0.2px #e6e6e6;">17.814 W</div>
<svg style="position:absolute;left:516.80px;top:223.59px" width="5" height="7.6" viewBox="0 0 5 8"><path d="M2.2 0 L5 0 L3.4 3 L4.8 3 L0.6 8 L1.6 4.2 L0.2 4.2Z" fill="#f2c21b"/></svg>
<div style="position:absolute;top:223.89px;font-size:7.0px;line-height:7.0px;color:#e6e6e6;white-space:nowrap;right:158.00px;transform-origin:100% 50%;transform: scaleX(0.85);-webkit-text-stroke:0.2px #e6e6e6;">20.136 W</div>
<div style="position:absolute;top:223.89px;font-size:7.0px;line-height:7.0px;color:#e6e6e6;white-space:nowrap;right:116.50px;transform-origin:100% 50%;transform: scaleX(0.85);-webkit-text-stroke:0.2px #e6e6e6;">9.893 W</div>
<div style="position:absolute;top:223.89px;font-size:7.0px;line-height:7.0px;color:#e6e6e6;white-space:nowrap;right:74.50px;transform-origin:100% 50%;transform: scaleX(0.85);-webkit-text-stroke:0.2px #e6e6e6;">25.968 W</div>
<div style="position:absolute;top:223.89px;font-size:7.0px;line-height:7.0px;color:#e6e6e6;white-space:nowrap;right:33.00px;transform-origin:100% 50%;transform: scaleX(0.85);-webkit-text-stroke:0.2px #e6e6e6;">19.561 W</div>
<div style="position:absolute;left:523.30px;top:232.00px;width:245.00px;height:9.22px;background:#1c1c1c;"></div>
<svg style="position:absolute;left:515.60px;top:233.41px" width="6.4" height="6.4" viewBox="0 0 8 8"><circle cx="4" cy="4" r="3.8" fill="#d9d9d9"/><circle cx="4" cy="4" r="2.6" fill="#f4f4f4"/><path d="M2.5 3.5 L4 4.5 L5.5 3.5" fill="none" stroke="#777" stroke-width="0.7"/></svg>
<div style="position:absolute;top:233.11px;font-size:7.0px;line-height:7.0px;color:#e6e6e6;white-space:nowrap;right:158.00px;transform-origin:100% 50%;transform: scaleX(0.85);-webkit-text-stroke:0.2px #e6e6e6;">888.8 MHz</div>
<div style="position:absolute;top:233.11px;font-size:7.0px;line-height:7.0px;color:#e6e6e6;white-space:nowrap;right:116.50px;transform-origin:100% 50%;transform: scaleX(0.85);-webkit-text-stroke:0.2px #e6e6e6;">800.0 MHz</div>
<div style="position:absolute;top:233.11px;font-size:7.0px;line-height:7.0px;color:#e6e6e6;white-space:nowrap;right:74.50px;transform-origin:100% 50%;transform: scaleX(0.85);-webkit-text-stroke:0.2px #e6e6e6;">1,600.0 MHz</div>
<div style="position:absolute;top:233.11px;font-size:7.0px;line-height:7.0px;color:#e6e6e6;white-space:nowrap;right:33.00px;transform-origin:100% 50%;transform: scaleX(0.85);-webkit-text-stroke:0.2px #e6e6e6;">968.0 MHz</div>
<svg style="position:absolute;left:515.60px;top:242.64px" width="6.4" height="6.4" viewBox="0 0 8 8"><circle cx="4" cy="4" r="3.8" fill="#d9d9d9"/><circle cx="4" cy="4" r="2.6" fill="#f4f4f4"/><path d="M2.5 3.5 L4 4.5 L5.5 3.5" fill="none" stroke="#777" stroke-width="0.7"/></svg>
<div style="position:absolute;top:242.34px;font-size:7.0px;line-height:7.0px;color:#e6e6e6;white-space:nowrap;right:158.00px;transform-origin:100% 50%;transform: scaleX(0.85);-webkit-text-stroke:0.2px #e6e6e6;">794.2 MHz</div>
<div style="position:absolute;top:242.34px;font-size:7.0px;line-height:7.0px;color:#e6e6e6;white-space:nowrap;right:116.50px;transform-origin:100% 50%;transform: scaleX(0.85);-webkit-text-stroke:0.2px #e6e6e6;">716.6 MHz</div>
<div style="position:absolute;top:242.34px;font-size:7.0px;line-height:7.0px;color:#e6e6e6;white-space:nowrap;right:74.50px;transform-origin:100% 50%;transform: scaleX(0.85);-webkit-text-stroke:0.2px #e6e6e6;">800.0 MHz</div>
<div style="position:absolute;top:242.34px;font-size:7.0px;line-height:7.0px;color:#e6e6e6;white-space:nowrap;right:33.00px;transform-origin:100% 50%;transform: scaleX(0.85);-webkit-text-stroke:0.2px #e6e6e6;">795.8 MHz</div>
<div style="position:absolute;left:523.30px;top:250.45px;width:245.00px;height:9.22px;background:#1c1c1c;"></div>
<svg style="position:absolute;left:515.60px;top:251.86px" width="6.4" height="6.4" viewBox="0 0 8 8"><circle cx="4" cy="4" r="3.8" fill="#d9d9d9"/><circle cx="4" cy="4" r="2.6" fill="#f4f4f4"/><path d="M2.5 3.5 L4 4.5 L5.5 3.5" fill="none" stroke="#777" stroke-width="0.7"/></svg>
<div style="position:absolute;top:251.56px;font-size:7.0px;line-height:7.0px;color:#e6e6e6;white-space:nowrap;right:158.00px;transform-origin:100% 50%;transform: scaleX(0.85);-webkit-text-stroke:0.2px #e6e6e6;">3,435.2 MHz</div>
<div style="position:absolute;top:251.56px;font-size:7.0px;line-height:7.0px;color:#e6e6e6;white-space:nowrap;right:116.50px;transform-origin:100% 50%;transform: scaleX(0.85);-webkit-text-stroke:0.2px #e6e6e6;">1,447.3 MHz</div>
<div style="position:absolute;top:251.56px;font-size:7.0px;line-height:7.0px;color:#e6e6e6;white-space:nowrap;right:74.50px;transform-origin:100% 50%;transform: scaleX(0.85);-webkit-text-stroke:0.2px #e6e6e6;">3,978.1 MHz</div>
<div style="position:absolute;top:251.56px;font-size:7.0px;line-height:7.0px;color:#e6e6e6;white-space:nowrap;right:33.00px;transform-origin:100% 50%;transform: scaleX(0.85);-webkit-text-stroke:0.2px #e6e6e6;">2,423.5 MHz</div>
<svg style="position:absolute;left:515.60px;top:261.09px" width="6.4" height="6.4" viewBox="0 0 8 8"><circle cx="4" cy="4" r="3.8" fill="#d9d9d9"/><circle cx="4" cy="4" r="2.6" fill="#f4f4f4"/><path d="M2.5 3.5 L4 4.5 L5.5 3.5" fill="none" stroke="#777" stroke-width="0.7"/></svg>
<div style="position:absolute;top:260.79px;font-size:7.0px;line-height:7.0px;color:#e6e6e6;white-space:nowrap;right:158.00px;transform-origin:100% 50%;transform: scaleX(0.85);-webkit-text-stroke:0.2px #e6e6e6;">3,858.8 MHz</div>
<div style="position:absolute;top:260.79px;font-size:7.0px;line-height:7.0px;color:#e6e6e6;white-space:nowrap;right:116.50px;transform-origin:100% 50%;transform: scaleX(0.85);-webkit-text-stroke:0.2px #e6e6e6;">1,448.0 MHz</div>
<div style="position:absolute;top:260.79px;font-size:7.0px;line-height:7.0px;color:#e6e6e6;white-space:nowrap;right:74.50px;transform-origin:100% 50%;transform: scaleX(0.85);-webkit-text-stroke:0.2px #e6e6e6;">4,485.8 MHz</div>
<div style="position:absolute;top:260.79px;font-size:7.0px;line-height:7.0px;color:#e6e6e6;white-space:nowrap;right:33.00px;transform-origin:100% 50%;transform: scaleX(0.85);-webkit-text-stroke:0.2px #e6e6e6;">2,611.3 MHz</div>
<div style="position:absolute;left:523.30px;top:268.90px;width:245.00px;height:9.22px;background:#1c1c1c;"></div>
<svg style="position:absolute;left:515.60px;top:270.31px" width="6.4" height="6.4" viewBox="0 0 8 8"><circle cx="4" cy="4" r="3.8" fill="#d9d9d9"/><circle cx="4" cy="4" r="2.6" fill="#f4f4f4"/><path d="M2.5 3.5 L4 4.5 L5.5 3.5" fill="none" stroke="#777" stroke-width="0.7"/></svg>
<div style="position:absolute;top:270.01px;font-size:7.0px;line-height:7.0px;color:#e6e6e6;white-space:nowrap;right:158.00px;transform-origin:100% 50%;transform: scaleX(0.85);-webkit-text-stroke:0.2px #e6e6e6;">33.6 %</div>
<div style="position:absolute;top:270.01px;font-size:7.0px;line-height:7.0px;color:#e6e6e6;white-space:nowrap;right:116.50px;transform-origin:100% 50%;transform: scaleX(0.85);-webkit-text-stroke:0.2px #e6e6e6;">15.0 %</div>
<div style="position:absolute;top:270.01px;font-size:7.0px;line-height:7.0px;color:#e6e6e6;white-space:nowrap;right:74.50px;transform-origin:100% 50%;transform: scaleX(0.85);-webkit-text-stroke:0.2px #e6e6e6;">49.9 %</div>
<div style="position:absolute;top:270.01px;font-size:7.0px;line-height:7.0px;color:#e6e6e6;white-space:nowrap;right:33.00px;transform-origin:100% 50%;transform: scaleX(0.85);-webkit-text-stroke:0.2px #e6e6e6;">35.0 %</div>
<svg style="position:absolute;left:515.60px;top:279.54px" width="6.4" height="6.4" viewBox="0 0 8 8"><circle cx="4" cy="4" r="3.8" fill="#d9d9d9"/><circle cx="4" cy="4" r="2.6" fill="#f4f4f4"/><path d="M2.5 3.5 L4 4.5 L5.5 3.5" fill="none" stroke="#777" stroke-width="0.7"/></svg>
<div style="position:absolute;top:279.24px;font-size:7.0px;line-height:7.0px;color:#e6e6e6;white-space:nowrap;right:158.00px;transform-origin:100% 50%;transform: scaleX(0.85);-webkit-text-stroke:0.2px #e6e6e6;">89.0 %</div>
<div style="position:absolute;top:279.24px;font-size:7.0px;line-height:7.0px;color:#e6e6e6;white-space:nowrap;right:116.50px;transform-origin:100% 50%;transform: scaleX(0.85);-webkit-text-stroke:0.2px #e6e6e6;">55.3 %</div>
<div style="position:absolute;top:279.24px;font-size:7.0px;line-height:7.0px;color:#e6e6e6;white-space:nowrap;right:74.50px;transform-origin:100% 50%;transform: scaleX(0.85);-webkit-text-stroke:0.2px #e6e6e6;">95.4 %</div>
<div style="position:absolute;top:279.24px;font-size:7.0px;line-height:7.0px;color:#e6e6e6;white-space:nowrap;right:33.00px;transform-origin:100% 50%;transform: scaleX(0.85);-webkit-text-stroke:0.2px #e6e6e6;">71.2 %</div>
<div style="position:absolute;left:523.30px;top:287.35px;width:245.00px;height:9.22px;background:#1c1c1c;"></div>
<svg style="position:absolute;left:515.60px;top:288.76px" width="6.4" height="6.4" viewBox="0 0 8 8"><circle cx="4" cy="4" r="3.8" fill="#d9d9d9"/><circle cx="4" cy="4" r="2.6" fill="#f4f4f4"/><path d="M2.5 3.5 L4 4.5 L5.5 3.5" fill="none" stroke="#777" stroke-width="0.7"/></svg>
<div style="position:absolute;top:288.46px;font-size:7.0px;line-height:7.0px;color:#e6e6e6;white-space:nowrap;right:158.00px;transform-origin:100% 50%;transform: scaleX(0.85);-webkit-text-stroke:0.2px #e6e6e6;">67.1 %</div>
<div style="position:absolute;top:288.46px;font-size:7.0px;line-height:7.0px;color:#e6e6e6;white-space:nowrap;right:116.50px;transform-origin:100% 50%;transform: scaleX(0.85);-webkit-text-stroke:0.2px #e6e6e6;">32.2 %</div>
<div style="position:absolute;top:288.46px;font-size:7.0px;line-height:7.0px;color:#e6e6e6;white-space:nowrap;right:74.50px;transform-origin:100% 50%;transform: scaleX(0.85);-webkit-text-stroke:0.2px #e6e6e6;">86.6 %</div>
<div style="position:absolute;top:288.46px;font-size:7.0px;line-height:7.0px;color:#e6e6e6;white-space:nowrap;right:33.00px;transform-origin:100% 50%;transform: scaleX(0.85);-webkit-text-stroke:0.2px #e6e6e6;">65.3 %</div>
<svg style="position:absolute;left:515.60px;top:297.99px" width="6.4" height="6.4" viewBox="0 0 8 8"><circle cx="4" cy="4" r="3.8" fill="#d9d9d9"/><circle cx="4" cy="4" r="2.6" fill="#f4f4f4"/><path d="M2.5 3.5 L4 4.5 L5.5 3.5" fill="none" stroke="#777" stroke-width="0.7"/></svg>
<div style="position:absolute;top:297.69px;font-size:7.0px;line-height:7.0px;color:#e6e6e6;white-space:nowrap;right:158.00px;transform-origin:100% 50%;transform: scaleX(0.85);-webkit-text-stroke:0.2px #e6e6e6;">77.5 %</div>
<div style="position:absolute;top:297.69px;font-size:7.0px;line-height:7.0px;color:#e6e6e6;white-space:nowrap;right:116.50px;transform-origin:100% 50%;transform: scaleX(0.85);-webkit-text-stroke:0.2px #e6e6e6;">71.2 %</div>
<div style="position:absolute;top:297.69px;font-size:7.0px;line-height:7.0px;color:#e6e6e6;white-space:nowrap;right:74.50px;transform-origin:100% 50%;transform: scaleX(0.85);-webkit-text-stroke:0.2px #e6e6e6;">97.6 %</div>
<div style="position:absolute;top:297.69px;font-size:7.0px;line-height:7.0px;color:#e6e6e6;white-space:nowrap;right:33.00px;transform-origin:100% 50%;transform: scaleX(0.85);-webkit-text-stroke:0.2px #e6e6e6;">80.1 %</div>
<div style="position:absolute;left:523.30px;top:305.80px;width:245.00px;height:9.22px;background:#1c1c1c;"></div>
<svg style="position:absolute;left:515.60px;top:307.21px" width="6.4" height="6.4" viewBox="0 0 8 8"><circle cx="4" cy="4" r="3.8" fill="#d9d9d9"/><circle cx="4" cy="4" r="2.6" fill="#f4f4f4"/><path d="M2.5 3.5 L4 4.5 L5.5 3.5" fill="none" stroke="#777" stroke-width="0.7"/></svg>
<div style="position:absolute;top:306.91px;font-size:7.0px;line-height:7.0px;color:#e6e6e6;white-space:nowrap;right:158.00px;transform-origin:100% 50%;transform: scaleX(0.85);-webkit-text-stroke:0.2px #e6e6e6;">99.4 %</div>
<div style="position:absolute;top:306.91px;font-size:7.0px;line-height:7.0px;color:#e6e6e6;white-space:nowrap;right:116.50px;transform-origin:100% 50%;transform: scaleX(0.85);-webkit-text-stroke:0.2px #e6e6e6;">41.1 %</div>
<div style="position:absolute;top:306.91px;font-size:7.0px;line-height:7.0px;color:#e6e6e6;white-space:nowrap;right:74.50px;transform-origin:100% 50%;transform: scaleX(0.85);-webkit-text-stroke:0.2px #e6e6e6;">100.7 %</div>
<div style="position:absolute;top:306.91px;font-size:7.0px;line-height:7.0px;color:#e6e6e6;white-space:nowrap;right:33.00px;transform-origin:100% 50%;transform: scaleX(0.85);-webkit-text-stroke:0.2px #e6e6e6;">96.8 %</div>
<svg style="position:absolute;left:515.60px;top:316.44px" width="6.4" height="6.4" viewBox="0 0 8 8"><circle cx="4" cy="4" r="3.8" fill="#d9d9d9"/><circle cx="4" cy="4" r="2.6" fill="#f4f4f4"/><path d="M2.5 3.5 L4 4.5 L5.5 3.5" fill="none" stroke="#777" stroke-width="0.7"/></svg>
<div style="position:absolute;top:316.14px;font-size:7.0px;line-height:7.0px;color:#e6e6e6;white-space:nowrap;right:158.00px;transform-origin:100% 50%;transform: scaleX(0.85);-webkit-text-stroke:0.2px #e6e6e6;">No</div>
<div style="position:absolute;top:316.14px;font-size:7.0px;line-height:7.0px;color:#e6e6e6;white-space:nowrap;right:116.50px;transform-origin:100% 50%;transform: scaleX(0.85);-webkit-text-stroke:0.2px #e6e6e6;">No</div>
<div style="position:absolute;top:316.14px;font-size:7.0px;line-height:7.0px;color:#e6e6e6;white-space:nowrap;right:74.50px;transform-origin:100% 50%;transform: scaleX(0.85);-webkit-text-stroke:0.2px #e6e6e6;">No</div>
<div style="position:absolute;left:523.30px;top:324.25px;width:245.00px;height:9.22px;background:#1c1c1c;"></div>
<svg style="position:absolute;left:515.60px;top:325.66px" width="6.4" height="6.4" viewBox="0 0 8 8"><circle cx="4" cy="4" r="3.8" fill="#d9d9d9"/><circle cx="4" cy="4" r="2.6" fill="#f4f4f4"/><path d="M2.5 3.5 L4 4.5 L5.5 3.5" fill="none" stroke="#777" stroke-width="0.7"/></svg>
<div style="position:absolute;top:325.36px;font-size:7.0px;line-height:7.0px;color:#e6e6e6;white-space:nowrap;right:158.00px;transform-origin:100% 50%;transform: scaleX(0.85);-webkit-text-stroke:0.2px #e6e6e6;">No</div>
<div style="position:absolute;top:325.36px;font-size:7.0px;line-height:7.0px;color:#e6e6e6;white-space:nowrap;right:116.50px;transform-origin:100% 50%;transform: scaleX(0.85);-webkit-text-stroke:0.2px #e6e6e6;">No</div>
<div style="position:absolute;top:325.36px;font-size:7.0px;line-height:7.0px;color:#e6e6e6;white-space:nowrap;right:74.50px;transform-origin:100% 50%;transform: scaleX(0.85);-webkit-text-stroke:0.2px #e6e6e6;">No</div>
<svg style="position:absolute;left:515.60px;top:334.89px" width="6.4" height="6.4" viewBox="0 0 8 8"><circle cx="4" cy="4" r="3.8" fill="#d9d9d9"/><circle cx="4" cy="4" r="2.6" fill="#f4f4f4"/><path d="M2.5 3.5 L4 4.5 L5.5 3.5" fill="none" stroke="#777" stroke-width="0.7"/></svg>
<div style="position:absolute;top:334.59px;font-size:7.0px;line-height:7.0px;color:#e6e6e6;white-space:nowrap;right:158.00px;transform-origin:100% 50%;transform: scaleX(0.85);-webkit-text-stroke:0.2px #e6e6e6;">No</div>
<div style="position:absolute;top:334.59px;font-size:7.0px;line-height:7.0px;color:#e6e6e6;white-space:nowrap;right:116.50px;transform-origin:100% 50%;transform: scaleX(0.85);-webkit-text-stroke:0.2px #e6e6e6;">No</div>
<div style="position:absolute;top:334.59px;font-size:7.0px;line-height:7.0px;color:#e6e6e6;white-space:nowrap;right:74.50px;transform-origin:100% 50%;transform: scaleX(0.85);-webkit-text-stroke:0.2px #e6e6e6;">No</div>
<div style="position:absolute;left:523.30px;top:342.70px;width:245.00px;height:9.22px;background:#1c1c1c;"></div>
<svg style="position:absolute;left:515.60px;top:344.11px" width="6.4" height="6.4" viewBox="0 0 8 8"><circle cx="4" cy="4" r="3.8" fill="#d9d9d9"/><circle cx="4" cy="4" r="2.6" fill="#f4f4f4"/><path d="M2.5 3.5 L4 4.5 L5.5 3.5" fill="none" stroke="#777" stroke-width="0.7"/></svg>
<div style="position:absolute;top:343.81px;font-size:7.0px;line-height:7.0px;color:#e6e6e6;white-space:nowrap;right:158.00px;transform-origin:100% 50%;transform: scaleX(0.85);-webkit-text-stroke:0.2px #e6e6e6;">3.417 Gbps</div>
<div style="position:absolute;top:343.81px;font-size:7.0px;line-height:7.0px;color:#e6e6e6;white-space:nowrap;right:116.50px;transform-origin:100% 50%;transform: scaleX(0.85);-webkit-text-stroke:0.2px #e6e6e6;">0.494 Gbps</div>
<div style="position:absolute;top:343.81px;font-size:7.0px;line-height:7.0px;color:#e6e6e6;white-space:nowrap;right:74.50px;transform-origin:100% 50%;transform: scaleX(0.85);-webkit-text-stroke:0.2px #e6e6e6;">9.355 Gbps</div>
<div style="position:absolute;top:343.81px;font-size:7.0px;line-height:7.0px;color:#e6e6e6;white-space:nowrap;right:33.00px;transform-origin:100% 50%;transform: scaleX(0.85);-webkit-text-stroke:0.2px #e6e6e6;">4.389 Gbps</div>
<svg style="position:absolute;left:515.60px;top:353.34px" width="6.4" height="6.4" viewBox="0 0 8 8"><circle cx="4" cy="4" r="3.8" fill="#d9d9d9"/><circle cx="4" cy="4" r="2.6" fill="#f4f4f4"/><path d="M2.5 3.5 L4 4.5 L5.5 3.5" fill="none" stroke="#777" stroke-width="0.7"/></svg>
<div style="position:absolute;top:353.04px;font-size:7.0px;line-height:7.0px;color:#e6e6e6;white-space:nowrap;right:158.00px;transform-origin:100% 50%;transform: scaleX(0.85);-webkit-text-stroke:0.2px #e6e6e6;">2.192 Gbps</div>
<div style="position:absolute;top:353.04px;font-size:7.0px;line-height:7.0px;color:#e6e6e6;white-space:nowrap;right:116.50px;transform-origin:100% 50%;transform: scaleX(0.85);-webkit-text-stroke:0.2px #e6e6e6;">0.101 Gbps</div>
<div style="position:absolute;top:353.04px;font-size:7.0px;line-height:7.0px;color:#e6e6e6;white-space:nowrap;right:74.50px;transform-origin:100% 50%;transform: scaleX(0.85);-webkit-text-stroke:0.2px #e6e6e6;">7.698 Gbps</div>
<div style="position:absolute;top:353.04px;font-size:7.0px;line-height:7.0px;color:#e6e6e6;white-space:nowrap;right:33.00px;transform-origin:100% 50%;transform: scaleX(0.85);-webkit-text-stroke:0.2px #e6e6e6;">2.262 Gbps</div>
</div>
<div style="position:absolute;left:0;top:0;width:800px;height:450px;clip-path:inset(47.5px 199px 93.30000000000001px 0);">
<div style="position:absolute;top:48.61px;font-size:7.0px;line-height:7.0px;color:#ececec;white-space:nowrap;left:524.20px;transform-origin:0 50%;transform: scaleX(0.836);-webkit-text-stroke:0.2px #ececec;">CPU (Tctl/Tdie)</div>
<div style="position:absolute;top:57.84px;font-size:7.0px;line-height:7.0px;color:#ececec;white-space:nowrap;left:524.20px;transform-origin:0 50%;transform: scaleX(0.836);-webkit-text-stroke:0.2px #ececec;">CPU Core</div>
<div style="position:absolute;top:67.06px;font-size:7.0px;line-height:7.0px;color:#ececec;white-space:nowrap;left:524.20px;transform-origin:0 50%;transform: scaleX(0.836);-webkit-text-stroke:0.2px #ececec;">CPU SOC</div>
<div style="position:absolute;top:76.29px;font-size:7.0px;line-height:7.0px;color:#ececec;white-space:nowrap;left:524.20px;transform-origin:0 50%;transform: scaleX(0.836);-webkit-text-stroke:0.2px #ececec;">APU GFX</div>
<div style="position:absolute;top:85.51px;font-size:7.0px;line-height:7.0px;color:#ececec;white-space:nowrap;left:524.20px;transform-origin:0 50%;transform: scaleX(0.836);-webkit-text-stroke:0.2px #ececec;">CPU Skin Temperature</div>
<div style="position:absolute;top:94.74px;font-size:7.0px;line-height:7.0px;color:#ececec;white-space:nowrap;left:533.20px;transform-origin:0 50%;transform: scaleX(0.836);-webkit-text-stroke:0.2px #ececec;">Core Temperatures</div>
<div style="position:absolute;top:103.96px;font-size:7.0px;line-height:7.0px;color:#ececec;white-space:nowrap;left:524.20px;transform-origin:0 50%;transform: scaleX(0.836);-webkit-text-stroke:0.2px #ececec;">L3 Cache</div>
<div style="position:absolute;top:113.19px;font-size:7.0px;line-height:7.0px;color:#ececec;white-space:nowrap;left:524.20px;transform-origin:0 50%;transform: scaleX(0.836);-webkit-text-stroke:0.2px #ececec;">CPU VDDCR_VDD Voltage (...</div>
<div style="position:absolute;top:122.41px;font-size:7.0px;line-height:7.0px;color:#ececec;white-space:nowrap;left:524.20px;transform-origin:0 50%;transform: scaleX(0.836);-webkit-text-stroke:0.2px #ececec;">CPU VDDCR_SOC Voltage (...</div>
<div style="position:absolute;top:131.64px;font-size:7.0px;line-height:7.0px;color:#ececec;white-space:nowrap;left:524.20px;transform-origin:0 50%;transform: scaleX(0.836);-webkit-text-stroke:0.2px #ececec;">CPU VDDCR_SR Voltage (S...</div>
<div style="position:absolute;top:140.86px;font-size:7.0px;line-height:7.0px;color:#ececec;white-space:nowrap;left:524.20px;transform-origin:0 50%;transform: scaleX(0.836);-webkit-text-stroke:0.2px #ececec;">CPU Core Current (SVI2 TF...</div>
<div style="position:absolute;top:150.09px;font-size:7.0px;line-height:7.0px;color:#ececec;white-space:nowrap;left:524.20px;transform-origin:0 50%;transform: scaleX(0.836);-webkit-text-stroke:0.2px #ececec;">SoC Current (SVI2 TFN)</div>
<div style="position:absolute;top:159.31px;font-size:7.0px;line-height:7.0px;color:#ececec;white-space:nowrap;left:524.20px;transform-origin:0 50%;transform: scaleX(0.836);-webkit-text-stroke:0.2px #ececec;">CPU TDC</div>
<div style="position:absolute;top:168.54px;font-size:7.0px;line-height:7.0px;color:#ececec;white-space:nowrap;left:524.20px;transform-origin:0 50%;transform: scaleX(0.836);-webkit-text-stroke:0.2px #ececec;">CPU EDC</div>
<div style="position:absolute;top:177.76px;font-size:7.0px;line-height:7.0px;color:#ececec;white-space:nowrap;left:524.20px;transform-origin:0 50%;transform: scaleX(0.836);-webkit-text-stroke:0.2px #ececec;">CPU Package Power</div>
<div style="position:absolute;top:186.99px;font-size:7.0px;line-height:7.0px;color:#ececec;white-space:nowrap;left:533.20px;transform-origin:0 50%;transform: scaleX(0.836);-webkit-text-stroke:0.2px #ececec;">Core Powers</div>
<div style="position:absolute;top:196.21px;font-size:7.0px;line-height:7.0px;color:#ececec;white-space:nowrap;left:524.20px;transform-origin:0 50%;transform: scaleX(0.836);-webkit-text-stroke:0.2px #ececec;">CPU Core Power (SVI2 TFN)</div>
<div style="position:absolute;top:205.44px;font-size:7.0px;line-height:7.0px;color:#ececec;white-space:nowrap;left:524.20px;transform-origin:0 50%;transform: scaleX(0.836);-webkit-text-stroke:0.2px #ececec;">CPU SoC Power (SVI2 TFN)</div>
<div style="position:absolute;top:214.66px;font-size:7.0px;line-height:7.0px;color:#ececec;white-space:nowrap;left:524.20px;transform-origin:0 50%;transform: scaleX(0.836);-webkit-text-stroke:0.2px #ececec;">Core+SoC+SR Power (SVI...</div>
<div style="position:absolute;top:223.89px;font-size:7.0px;line-height:7.0px;color:#ececec;white-space:nowrap;left:524.20px;transform-origin:0 50%;transform: scaleX(0.836);-webkit-text-stroke:0.2px #ececec;">APU STAPM</div>
<div style="position:absolute;top:233.11px;font-size:7.0px;line-height:7.0px;color:#ececec;white-space:nowrap;left:524.20px;transform-origin:0 50%;transform: scaleX(0.836);-webkit-text-stroke:0.2px #ececec;">Infinity Fabric Clock (FCLK)</div>
<div style="position:absolute;top:242.34px;font-size:7.0px;line-height:7.0px;color:#ececec;white-space:nowrap;left:524.20px;transform-origin:0 50%;transform: scaleX(0.836);-webkit-text-stroke:0.2px #ececec;">Memory Controller Clock (U...</div>
<div style="position:absolute;top:251.56px;font-size:7.0px;line-height:7.0px;color:#ececec;white-space:nowrap;left:524.20px;transform-origin:0 50%;transform: scaleX(0.836);-webkit-text-stroke:0.2px #ececec;">L3 Cache</div>
<div style="position:absolute;top:260.79px;font-size:7.0px;line-height:7.0px;color:#ececec;white-space:nowrap;left:524.20px;transform-origin:0 50%;transform: scaleX(0.836);-webkit-text-stroke:0.2px #ececec;">Frequency Limit - Global</div>
<div style="position:absolute;top:270.01px;font-size:7.0px;line-height:7.0px;color:#ececec;white-space:nowrap;left:524.20px;transform-origin:0 50%;transform: scaleX(0.836);-webkit-text-stroke:0.2px #ececec;">CPU TDC Limit</div>
<div style="position:absolute;top:279.24px;font-size:7.0px;line-height:7.0px;color:#ececec;white-space:nowrap;left:524.20px;transform-origin:0 50%;transform: scaleX(0.836);-webkit-text-stroke:0.2px #ececec;">CPU EDC Limit</div>
<div style="position:absolute;top:288.46px;font-size:7.0px;line-height:7.0px;color:#ececec;white-space:nowrap;left:524.20px;transform-origin:0 50%;transform: scaleX(0.836);-webkit-text-stroke:0.2px #ececec;">CPU PPT FAST Limit</div>
<div style="position:absolute;top:297.69px;font-size:7.0px;line-height:7.0px;color:#ececec;white-space:nowrap;left:524.20px;transform-origin:0 50%;transform: scaleX(0.836);-webkit-text-stroke:0.2px #ececec;">CPU PPT SLOW Limit</div>
<div style="position:absolute;top:306.91px;font-size:7.0px;line-height:7.0px;color:#ececec;white-space:nowrap;left:524.20px;transform-origin:0 50%;transform: scaleX(0.836);-webkit-text-stroke:0.2px #ececec;">APU STAPM Limit</div>
<div style="position:absolute;top:316.14px;font-size:7.0px;line-height:7.0px;color:#ececec;white-space:nowrap;left:524.20px;transform-origin:0 50%;transform: scaleX(0.836);-webkit-text-stroke:0.2px #ececec;">Thermal Throttling (HTC)</div>
<div style="position:absolute;top:325.36px;font-size:7.0px;line-height:7.0px;color:#ececec;white-space:nowrap;left:524.20px;transform-origin:0 50%;transform: scaleX(0.836);-webkit-text-stroke:0.2px #ececec;">Thermal Throttling (PROCH...</div>
<div style="position:absolute;top:334.59px;font-size:7.0px;line-height:7.0px;color:#ececec;white-space:nowrap;left:524.20px;transform-origin:0 50%;transform: scaleX(0.836);-webkit-text-stroke:0.2px #ececec;">Thermal Throttling (PROCH...</div>
<div style="position:absolute;top:343.81px;font-size:7.0px;line-height:7.0px;color:#ececec;white-space:nowrap;left:524.20px;transform-origin:0 50%;transform: scaleX(0.836);-webkit-text-stroke:0.2px #ececec;">DRAM Read Bandwidth</div>
<div style="position:absolute;top:353.04px;font-size:7.0px;line-height:7.0px;color:#ececec;white-space:nowrap;left:524.20px;transform-origin:0 50%;transform: scaleX(0.836);-webkit-text-stroke:0.2px #ececec;">DRAM Write Bandwidth</div>
</div>
<div style="position:absolute;left:768.30px;top:37.50px;width:14.40px;height:10.00px;background:#1b1b1b;"></div>
<div style="position:absolute;left:768.30px;top:47.50px;width:4.00px;height:309.20px;background:#000;"></div>
<div style="position:absolute;left:772.30px;top:47.50px;width:10.40px;height:309.20px;background:#1e1e1e;"></div>
<div style="position:absolute;left:774.80px;top:142.00px;width:5.30px;height:77.30px;background:#a0a0a0;"></div>
<div style="position:absolute;left:503.30px;top:360.5px;width:24.30px;height:20px;border:0.9px solid #4a4742;border-radius:2px;background:#000;"></div>
<div style="position:absolute;left:528.30px;top:360.5px;width:23.50px;height:20px;border:0.9px solid #4a4742;border-radius:2px;background:#000;"></div>
<div style="position:absolute;left:589.40px;top:360.5px;width:24.40px;height:20px;border:0.9px solid #4a4742;border-radius:2px;background:#000;"></div>
<div style="position:absolute;left:619.00px;top:360.5px;width:23.60px;height:20px;border:0.9px solid #4a4742;border-radius:2px;background:#000;"></div>
<div style="position:absolute;left:680.75px;top:360.5px;width:24.05px;height:20px;border:0.9px solid #4a4742;border-radius:2px;background:#000;"></div>
<div style="position:absolute;left:706.20px;top:360.5px;width:23.70px;height:20px;border:0.9px solid #4a4742;border-radius:2px;background:#000;"></div>
<div style="position:absolute;left:731.80px;top:360.5px;width:24.00px;height:20px;border:0.9px solid #4a4742;border-radius:2px;background:#000;"></div>
<div style="position:absolute;left:757.50px;top:360.5px;width:24.40px;height:20px;border:0.9px solid #4a4742;border-radius:2px;background:#000;"></div>
<div style="position:absolute;top:366.30px;font-size:7.0px;line-height:7.0px;color:#e6e6e6;white-space:nowrap;right:122.00px;transform-origin:100% 50%;transform: scaleX(0.85);">0:05:17</div>
<svg style="position:absolute;left:506px;top:366.5px" width="19" height="9" viewBox="0 0 19 9"><path d="M0.5 4.5 L5 0 L5 2.5 L9 2.5 L9 6.5 L5 6.5 L5 9Z" fill="#4ea3ea"/><path d="M18.5 4.5 L14 0 L14 2.5 L10 2.5 L10 6.5 L14 6.5 L14 9Z" fill="#4ea3ea"/></svg>
<svg style="position:absolute;left:531.5px;top:366.5px" width="17" height="9" viewBox="0 0 17 9"><path d="M8 4.5 L4 0.5 L4 2.8 L0.5 2.8 L0.5 6.2 L4 6.2 L4 8.5Z" fill="#3b7dbf"/><path d="M9 4.5 L13 0.5 L13 2.8 L16.5 2.8 L16.5 6.2 L13 6.2 L13 8.5Z" fill="#3b7dbf"/></svg>
<svg style="position:absolute;left:592px;top:362px" width="18" height="17" viewBox="0 0 18 17"><path d="M5 1.5 L14.5 2.5 L13 13 L4 12Z" fill="#3a4fd0"/><path d="M9 2 L14.5 2.5 L13 13 L9 12.5Z" fill="#b8c4f0"/><circle cx="6" cy="8" r="3.6" fill="#aab4d8" stroke="#dde" stroke-width="0.9"/><path d="M7.5 11 L10.5 14.5" stroke="#d8c890" stroke-width="2"/></svg>
<svg style="position:absolute;left:621px;top:362px" width="20" height="17" viewBox="0 0 20 17"><rect x="1" y="1" width="8" height="6" fill="#3c9ae6" stroke="#9fd0f5" stroke-width="0.8"/><rect x="3.5" y="7.5" width="3" height="1.5" fill="#ddd"/><rect x="8.5" y="8" width="8" height="6" fill="#3c9ae6" stroke="#9fd0f5" stroke-width="0.8"/><rect x="11" y="14.5" width="3" height="1.5" fill="#ddd"/><path d="M9.5 3 L12.5 3 L12.5 7.5" fill="none" stroke="#777" stroke-width="0.6"/></svg>
<svg style="position:absolute;left:683.5px;top:361.6px" width="18" height="18" viewBox="0 0 18 18"><circle cx="9" cy="9" r="8.5" fill="#f6f6f6"/><path d="M9 3 L9 9 L13 9" fill="none" stroke="#111" stroke-width="1.1"/><g stroke="#666" stroke-width="0.6"><path d="M9 1.3 L9 2.3 M9 15.7 L9 16.7 M1.3 9 L2.3 9 M15.7 9 L16.7 9"/></g></svg>
<svg style="position:absolute;left:711px;top:362.5px" width="16" height="16" viewBox="0 0 16 16"><path d="M0.8 0.3 L9.5 0.3 L13.2 4 L13.2 14.8 L0.8 14.8Z" fill="#e4e4e4"/><path d="M3 2 L3 14 M6 2 L6 14 M9 3 L9 14" stroke="#cfcfcf" stroke-width="0.6"/><path d="M12.5 10 L12.5 15.5 M9.8 12.8 L15.2 12.8" stroke="#9fcf3a" stroke-width="2.2"/></svg>
<svg style="position:absolute;left:734.4px;top:361.4px" width="18" height="18" viewBox="0 0 18 18"><path d="M17.23,7.33 L17.23,10.67 L14.64,11.06 L14.44,11.53 L16.00,13.64 L13.64,16.00 L11.53,14.44 L11.06,14.64 L10.67,17.23 L7.33,17.23 L6.94,14.64 L6.47,14.44 L4.36,16.00 L2.00,13.64 L3.56,11.53 L3.36,11.06 L0.77,10.67 L0.77,7.33 L3.36,6.94 L3.56,6.47 L2.00,4.36 L4.36,2.00 L6.47,3.56 L6.94,3.36 L7.33,0.77 L10.67,0.77 L11.06,3.36 L11.53,3.56 L13.64,2.00 L16.00,4.36 L14.44,6.47 L14.64,6.94Z M9 5.2 A3.8 3.8 0 1 0 9.01 5.2Z" fill="#d2d2d2" fill-rule="evenodd"/></svg>
<svg style="position:absolute;left:763px;top:364px" width="13" height="13" viewBox="0 0 13 13"><path d="M1.2 1.2 L11.8 11.8 M11.8 1.2 L1.2 11.8" stroke="#4aaee3" stroke-width="3"/></svg>
</div></body></html>
